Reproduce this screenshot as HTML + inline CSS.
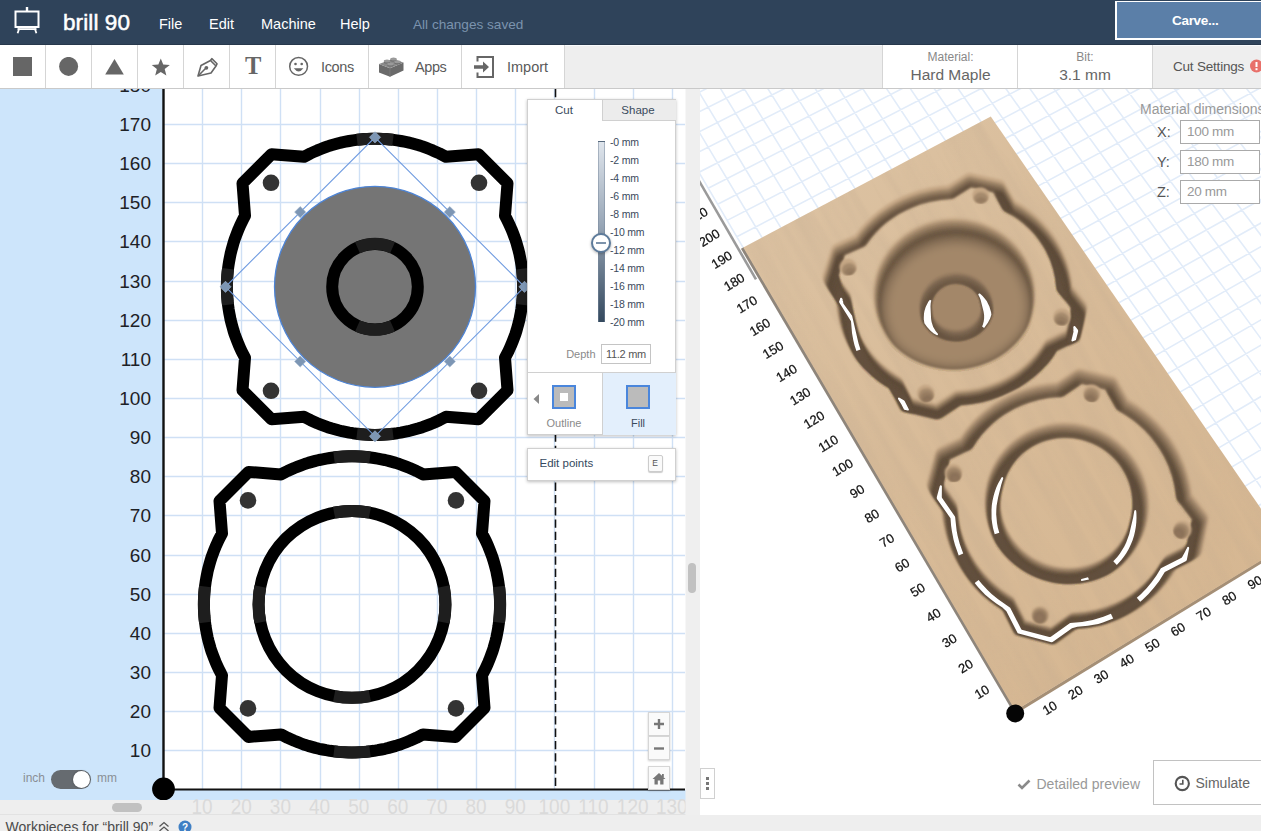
<!DOCTYPE html>
<html lang="en">
<head>
<meta charset="utf-8">
<title>brill 90 - Easel</title>
<style>
*{box-sizing:border-box;margin:0;padding:0}
html,body{width:1261px;height:831px;overflow:hidden;background:#fff;font-family:"Liberation Sans",sans-serif;color:#555}
.abs{position:absolute}
#nav{position:absolute;left:0;top:0;width:1261px;height:45px;background:#2f435a;border-bottom:1px solid #27384c}
#nav .t{position:absolute;color:#fff;white-space:nowrap;line-height:1}
#carve{position:absolute;left:1115px;top:0.5px;width:150px;height:39.5px;background:#5b7fa8;border:2px solid #fff;border-top-width:1.5px;color:#fff;font-weight:bold;font-size:13.5px;line-height:38px;padding-left:55px;letter-spacing:-0.3px}
#tb{position:absolute;left:0;top:45px;width:1261px;height:44px;background:#eeeeee;border-bottom:1px solid #c9c9c9;box-shadow:inset 0 1px 0 #f8fafc}
#tb .c{position:absolute;top:0;height:43px;background:#fff;border-right:1px solid #d5d5d5}
#tb .lbl{position:absolute;top:15px;font-size:14.5px;color:#5a5a5a;line-height:1;white-space:nowrap}
#tb svg{position:absolute}
.mat{position:absolute;top:0;height:43px;background:#fff;border-left:1px solid #d5d5d5;text-align:center}
.mat .a{position:absolute;left:0;right:0;top:6px;font-size:12px;color:#888;line-height:1}
.mat .b{position:absolute;left:0;right:0;top:22px;font-size:15.5px;color:#666;line-height:1}
#left{position:absolute;left:0;top:89px;width:700px;height:726px;overflow:hidden;background:#fff}
#right{position:absolute;left:700px;top:89px;width:561px;height:726px;overflow:hidden;background:#fff}
#bot{position:absolute;left:0;top:815px;width:1261px;height:16px;background:#eeeeee;overflow:hidden}
.panel{position:absolute;background:#fff;border:1px solid #d0d0d0;box-shadow:0 1px 3px rgba(0,0,0,.25)}
.tick{position:absolute;left:610px;font-size:10.5px;color:#3a4a5c;line-height:1;white-space:nowrap;letter-spacing:-0.2px}
.zb{position:absolute;left:648px;width:22px;height:24px;background:#fafafa;border:1px solid #d6d6d6;box-shadow:0 1px 2px rgba(0,0,0,.2)}
.inp{position:absolute;left:480px;width:80px;height:24px;border:1px solid #aaa;background:#fff;font-size:13.5px;color:#999;line-height:22px;padding-left:6px;white-space:nowrap;letter-spacing:-0.3px}
.dl{position:absolute;left:457px;font-size:14.5px;color:#555;line-height:1}
</style>
</head>
<body>
<!-- NAV -->
<div id="nav">
  <svg class="abs" style="left:13px;top:6px" width="28" height="28" viewBox="0 0 28 28">
    <rect x="2.5" y="5.5" width="23" height="15.5" fill="none" stroke="#fff" stroke-width="2"/>
    <rect x="12.8" y="1" width="2.4" height="4.5" fill="#fff"/>
    <rect x="4.5" y="22.2" width="19" height="1.8" fill="#fff"/>
    <path d="M6.2 22.5 L4.6 27.2 M21.8 22.5 L23.4 27.2" stroke="#fff" stroke-width="1.8" fill="none"/>
  </svg>
  <div class="t" id="title" style="left:63px;top:11.5px;font-size:22.5px;-webkit-text-stroke:0.5px #fff;letter-spacing:0.1px">brill 90</div>
  <div class="t" style="left:159px;top:17px;font-size:14.5px">File</div>
  <div class="t" style="left:209px;top:17px;font-size:14.5px">Edit</div>
  <div class="t" style="left:261px;top:17px;font-size:14.5px">Machine</div>
  <div class="t" style="left:340px;top:17px;font-size:14.5px">Help</div>
  <div class="t" style="left:413px;top:18px;font-size:13.6px;color:#7b93ae">All changes saved</div>
  <div id="carve">Carve...</div>
</div>
<!-- TOOLBAR -->
<div id="tb">
  <div class="c" style="left:0;width:46px"><svg style="left:13px;top:12px" width="19" height="19"><rect width="19" height="19" fill="#666"/></svg></div>
  <div class="c" style="left:46px;width:46px"><svg style="left:13px;top:12px" width="20" height="20"><circle cx="9.6" cy="9.4" r="9.5" fill="#666"/></svg></div>
  <div class="c" style="left:92px;width:46px"><svg style="left:12px;top:12px" width="22" height="20"><path d="M10.5 2 L19.8 17.6 L1.2 17.6 Z" fill="#666"/></svg></div>
  <div class="c" style="left:138px;width:46px"><svg style="left:12.7px;top:12px" width="20.5" height="20.5" viewBox="0 0 22 22"><path d="M10.5 1.5 L13.1 8.1 L20.2 8.5 L14.7 13 L16.5 19.9 L10.5 16.1 L4.5 19.9 L6.3 13 L0.8 8.5 L7.9 8.1 Z" fill="#666"/></svg></div>
  <div class="c" style="left:184px;width:46px"><svg style="left:11px;top:10px" width="24" height="24" viewBox="0 0 24 24"><g fill="none" stroke="#666" stroke-width="1.6" stroke-linejoin="round"><path d="M3 21 L6 10.5 L15.5 5.5 L21 11 L16 18 Z"/><path d="M15.5 5.500 L16.800 3.600 L22 8.800 L21 11"/><path d="M3.300 20.700 L10.500 13.500"/></g><circle cx="11.400" cy="12.800" r="1.900" fill="#666"/></svg></div>
  <div class="c" style="left:230px;width:46px"><div style="position:absolute;left:15px;top:9px;font-family:'Liberation Serif',serif;font-weight:bold;font-size:24.5px;color:#666;line-height:1">T</div></div>
  <div class="c" style="left:276px;width:93px"><svg style="left:12px;top:11px" width="22" height="22" viewBox="0 0 22 22"><circle cx="10.600" cy="10.400" r="8.900" fill="none" stroke="#666" stroke-width="1.500"/><circle cx="7.500" cy="8" r="1.300" fill="#666"/><circle cx="13.700" cy="8" r="1.300" fill="#666"/><path d="M5.800 12.300 Q10.600 18.600 15.400 12.300 Z" fill="#666"/></svg><div class="lbl" style="left:45px;letter-spacing:-0.35px">Icons</div></div>
  <div class="c" style="left:369px;width:93px"><svg style="left:9px;top:11px" width="27" height="22" viewBox="0 0 27 22"><path d="M1 8 L1 16.500 L12 20.800 L25.500 14.500 L25.500 6.500 L12 12.300 Z" fill="#6a6a6a"/><path d="M1 8 L12 12.300 L25.500 6.500 L14.500 3 Z" fill="#8a8a8a"/><path d="M12 12.300 V20.800" stroke="#7c7c7c" stroke-width="0.800"/><g fill="#6a6a6a"><ellipse cx="9" cy="6" rx="3.200" ry="1.600"/><ellipse cx="15.500" cy="4" rx="3.200" ry="1.600"/><ellipse cx="12.500" cy="9" rx="3.200" ry="1.600"/><ellipse cx="19.500" cy="6.800" rx="3.200" ry="1.600"/></g><g fill="#9a9a9a"><ellipse cx="9" cy="5" rx="3.200" ry="1.500"/><ellipse cx="15.500" cy="3" rx="3.200" ry="1.500"/><ellipse cx="12.500" cy="8" rx="3.200" ry="1.500"/><ellipse cx="19.500" cy="5.800" rx="3.200" ry="1.500"/></g></svg><div class="lbl" style="left:46px;letter-spacing:-0.4px">Apps</div></div>
  <div class="c" style="left:462px;width:103px"><svg style="left:11px;top:10px" width="24" height="24" viewBox="0 0 24 24"><path d="M4.500 6.500 V2 H20 V22 H4.500 V17.500" fill="none" stroke="#666" stroke-width="2"/><path d="M1 10.200 H10 V6.500 L16 12 L10 17.500 V13.800 H1 Z" fill="#666"/></svg><div class="lbl" style="left:45px">Import</div></div>
  <div class="mat" style="left:882px;width:136px"><div class="a">Material:</div><div class="b">Hard Maple</div></div>
  <div class="mat" style="left:1017px;width:136px;border-right:1px solid #d5d5d5"><div class="a">Bit:</div><div class="b">3.1 mm</div></div>
  <div class="lbl" style="left:1173px;top:15px;font-size:13.5px;color:#555;letter-spacing:-0.2px">Cut Settings</div>
  <svg style="left:1249px;top:14px" width="14" height="14"><circle cx="7.500" cy="7" r="6.500" fill="#e8706a"/><rect x="6.500" y="3" width="2" height="5" fill="#fff"/><rect x="6.500" y="9.200" width="2" height="2" fill="#fff"/></svg>
</div>
<div id="left">
<svg class="abs" style="left:0;top:0" width="700" height="726" viewBox="0 89 700 726" font-family="'Liberation Sans',sans-serif">
<rect x="0" y="89" width="163" height="712" fill="#cde5fb"/>
<rect x="163" y="790" width="523" height="11" fill="#cde5fb"/>
<path d="M202.5 89 V790 M241.5 89 V790 M280.5 89 V790 M320.5 89 V790 M359.5 89 V790 M398.5 89 V790 M437.5 89 V790 M476.5 89 V790 M515.5 89 V790 M554.5 89 V790 M594.5 89 V790 M633.5 89 V790 M672.5 89 V790 M163 750.5 H685 M163 711.5 H685 M163 672.5 H685 M163 633.5 H685 M163 594.5 H685 M163 555.5 H685 M163 515.5 H685 M163 476.5 H685 M163 437.5 H685 M163 398.5 H685 M163 359.5 H685 M163 320.5 H685 M163 281.5 H685 M163 241.5 H685 M163 202.5 H685 M163 163.5 H685 M163 124.5 H685" stroke="#cfe0f5" stroke-width="1.4" fill="none"/>
<path d="M555.5 89 V790" stroke="#111" stroke-width="1.6" stroke-dasharray="8.3 4" fill="none"/>
<path d="M163.5 89 V790" stroke="#111" stroke-width="2.4" fill="none"/>
<path d="M163 789.5 H685" stroke="#111" stroke-width="2" fill="none"/>
<text x="151" y="757.3" font-size="19" fill="#1d2126" text-anchor="end">10</text>
<text x="151" y="718.1" font-size="19" fill="#1d2126" text-anchor="end">20</text>
<text x="151" y="679" font-size="19" fill="#1d2126" text-anchor="end">30</text>
<text x="151" y="639.8" font-size="19" fill="#1d2126" text-anchor="end">40</text>
<text x="151" y="600.7" font-size="19" fill="#1d2126" text-anchor="end">50</text>
<text x="151" y="561.6" font-size="19" fill="#1d2126" text-anchor="end">60</text>
<text x="151" y="522.4" font-size="19" fill="#1d2126" text-anchor="end">70</text>
<text x="151" y="483.3" font-size="19" fill="#1d2126" text-anchor="end">80</text>
<text x="151" y="444.1" font-size="19" fill="#1d2126" text-anchor="end">90</text>
<text x="151" y="405" font-size="19" fill="#1d2126" text-anchor="end">100</text>
<text x="151" y="365.9" font-size="19" fill="#1d2126" text-anchor="end">110</text>
<text x="151" y="326.7" font-size="19" fill="#1d2126" text-anchor="end">120</text>
<text x="151" y="287.6" font-size="19" fill="#1d2126" text-anchor="end">130</text>
<text x="151" y="248.4" font-size="19" fill="#1d2126" text-anchor="end">140</text>
<text x="151" y="209.3" font-size="19" fill="#1d2126" text-anchor="end">150</text>
<text x="151" y="170.2" font-size="19" fill="#1d2126" text-anchor="end">160</text>
<text x="151" y="131" font-size="19" fill="#1d2126" text-anchor="end">170</text>
<text x="151" y="91.9" font-size="19" fill="#1d2126" text-anchor="end">180</text>
<circle cx="375" cy="286.8" r="100.5" fill="#757575" stroke="#4d84d6" stroke-width="1.3"/>
<circle cx="375" cy="286.8" r="42.8" fill="none" stroke="#000" stroke-width="12"/>
<path d="M304 156.8 L307.3 155.1 L310.6 153.4 L313.9 151.9 L317.3 150.4 L320.8 149 L324.2 147.7 L327.7 146.4 L331.2 145.3 L334.8 144.3 L338.4 143.3 L342 142.4 L345.6 141.7 L349.2 141 L352.9 140.4 L356.5 139.9 L360.2 139.4 L363.9 139.1 L367.6 138.9 L371.3 138.7 L375 138.7 L378.7 138.7 L382.4 138.9 L386.1 139.1 L389.8 139.4 L393.5 139.9 L397.1 140.4 L400.8 141 L404.4 141.7 L408 142.4 L411.6 143.3 L415.2 144.3 L418.8 145.3 L422.3 146.4 L425.8 147.7 L429.2 149 L432.7 150.4 L436.1 151.9 L439.4 153.4 L442.7 155.1 L446 156.8 L478.5 154.3 L507.5 183.3 L505 215.8 L506.7 219.1 L508.4 222.4 L509.9 225.7 L511.4 229.1 L512.8 232.6 L514.1 236 L515.4 239.5 L516.5 243 L517.5 246.6 L518.5 250.2 L519.4 253.8 L520.1 257.4 L520.8 261 L521.4 264.7 L521.9 268.3 L522.4 272 L522.7 275.7 L522.9 279.4 L523.1 283.1 L523.1 286.8 L523.1 290.5 L522.9 294.2 L522.7 297.9 L522.4 301.6 L521.9 305.3 L521.4 308.9 L520.8 312.6 L520.1 316.2 L519.4 319.8 L518.5 323.4 L517.5 327 L516.5 330.6 L515.4 334.1 L514.1 337.6 L512.8 341 L511.4 344.5 L509.9 347.9 L508.4 351.2 L506.7 354.5 L505 357.8 L507.5 390.3 L478.5 419.3 L446 416.8 L442.7 418.5 L439.4 420.2 L436.1 421.7 L432.7 423.2 L429.2 424.6 L425.8 425.9 L422.3 427.2 L418.8 428.3 L415.2 429.3 L411.6 430.3 L408 431.2 L404.4 431.9 L400.8 432.6 L397.1 433.2 L393.5 433.7 L389.8 434.2 L386.1 434.5 L382.4 434.7 L378.7 434.9 L375 434.9 L371.3 434.9 L367.6 434.7 L363.9 434.5 L360.2 434.2 L356.5 433.7 L352.9 433.2 L349.2 432.6 L345.6 431.9 L342 431.2 L338.4 430.3 L334.8 429.3 L331.2 428.3 L327.7 427.2 L324.2 425.9 L320.8 424.6 L317.3 423.2 L313.9 421.7 L310.6 420.2 L307.3 418.5 L304 416.8 L271.5 419.3 L242.5 390.3 L245 357.8 L243.3 354.5 L241.6 351.2 L240.1 347.9 L238.6 344.5 L237.2 341 L235.9 337.6 L234.6 334.1 L233.5 330.6 L232.5 327 L231.5 323.4 L230.6 319.8 L229.9 316.2 L229.2 312.6 L228.6 308.9 L228.1 305.3 L227.6 301.6 L227.3 297.9 L227.1 294.2 L226.9 290.5 L226.9 286.8 L226.9 283.1 L227.1 279.4 L227.3 275.7 L227.6 272 L228.1 268.3 L228.6 264.7 L229.2 261 L229.9 257.4 L230.6 253.8 L231.5 250.2 L232.5 246.6 L233.5 243 L234.6 239.5 L235.9 236 L237.2 232.6 L238.6 229.1 L240.1 225.7 L241.6 222.4 L243.3 219.1 L245 215.8 L242.5 183.3 L271.5 154.3 Z" fill="none" stroke="#000" stroke-width="12" stroke-linejoin="round"/>
<path d="M357 139.8 A148.1 148.1 0 0 1 393 139.8 M357.5 247.7 A42.8 42.8 0 0 1 392.5 247.7 M393 433.8 A148.1 148.1 0 0 1 357 433.8 M392.5 325.9 A42.8 42.8 0 0 1 357.5 325.9 M228 304.8 A148.1 148.1 0 0 1 228 268.8 M522 268.8 A148.1 148.1 0 0 1 522 304.8" fill="none" stroke="#1e1e1e" stroke-width="12"/>
<circle cx="271" cy="182.8" r="8.3" fill="#333"/>
<circle cx="271" cy="390.8" r="8.3" fill="#333"/>
<circle cx="479" cy="182.8" r="8.3" fill="#333"/>
<circle cx="479" cy="390.8" r="8.3" fill="#333"/>
<circle cx="352" cy="604.4" r="93.4" fill="none" stroke="#000" stroke-width="12"/>
<path d="M281 474.4 L284.3 472.7 L287.6 471 L290.9 469.5 L294.3 468 L297.8 466.6 L301.2 465.3 L304.7 464 L308.2 462.9 L311.8 461.9 L315.4 460.9 L319 460 L322.6 459.3 L326.2 458.6 L329.9 458 L333.5 457.5 L337.2 457 L340.9 456.7 L344.6 456.5 L348.3 456.3 L352 456.3 L355.7 456.3 L359.4 456.5 L363.1 456.7 L366.8 457 L370.5 457.5 L374.1 458 L377.8 458.6 L381.4 459.3 L385 460 L388.6 460.9 L392.2 461.9 L395.8 462.9 L399.3 464 L402.8 465.3 L406.2 466.6 L409.7 468 L413.1 469.5 L416.4 471 L419.7 472.7 L423 474.4 L455.5 471.9 L484.5 500.9 L482 533.4 L483.7 536.7 L485.4 540 L486.9 543.3 L488.4 546.7 L489.8 550.2 L491.1 553.6 L492.4 557.1 L493.5 560.6 L494.5 564.2 L495.5 567.8 L496.4 571.4 L497.1 575 L497.8 578.6 L498.4 582.3 L498.9 585.9 L499.4 589.6 L499.7 593.3 L499.9 597 L500.1 600.7 L500.1 604.4 L500.1 608.1 L499.9 611.8 L499.7 615.5 L499.4 619.2 L498.9 622.9 L498.4 626.5 L497.8 630.2 L497.1 633.8 L496.4 637.4 L495.5 641 L494.5 644.6 L493.5 648.2 L492.4 651.7 L491.1 655.2 L489.8 658.6 L488.4 662.1 L486.9 665.5 L485.4 668.8 L483.7 672.1 L482 675.4 L484.5 707.9 L455.5 736.9 L423 734.4 L419.7 736.1 L416.4 737.8 L413.1 739.3 L409.7 740.8 L406.2 742.2 L402.8 743.5 L399.3 744.8 L395.8 745.9 L392.2 746.9 L388.6 747.9 L385 748.8 L381.4 749.5 L377.8 750.2 L374.1 750.8 L370.5 751.3 L366.8 751.8 L363.1 752.1 L359.4 752.3 L355.7 752.5 L352 752.5 L348.3 752.5 L344.6 752.3 L340.9 752.1 L337.2 751.8 L333.5 751.3 L329.9 750.8 L326.2 750.2 L322.6 749.5 L319 748.8 L315.4 747.9 L311.8 746.9 L308.2 745.9 L304.7 744.8 L301.2 743.5 L297.8 742.2 L294.3 740.8 L290.9 739.3 L287.6 737.8 L284.3 736.1 L281 734.4 L248.5 736.9 L219.5 707.9 L222 675.4 L220.3 672.1 L218.6 668.8 L217.1 665.5 L215.6 662.1 L214.2 658.6 L212.9 655.2 L211.6 651.7 L210.5 648.2 L209.5 644.6 L208.5 641 L207.6 637.4 L206.9 633.8 L206.2 630.2 L205.6 626.5 L205.1 622.9 L204.6 619.2 L204.3 615.5 L204.1 611.8 L203.9 608.1 L203.9 604.4 L203.9 600.7 L204.1 597 L204.3 593.3 L204.6 589.6 L205.1 585.9 L205.6 582.3 L206.2 578.6 L206.9 575 L207.6 571.4 L208.5 567.8 L209.5 564.2 L210.5 560.6 L211.6 557.1 L212.9 553.6 L214.2 550.2 L215.6 546.7 L217.1 543.3 L218.6 540 L220.3 536.7 L222 533.4 L219.5 500.9 L248.5 471.9 Z" fill="none" stroke="#000" stroke-width="12" stroke-linejoin="round"/>
<path d="M334 457.4 A148.1 148.1 0 0 1 370 457.4 M334.1 512.7 A93.4 93.4 0 0 1 369.9 512.7 M370 751.4 A148.1 148.1 0 0 1 334 751.4 M369.9 696.1 A93.4 93.4 0 0 1 334.1 696.1 M205 622.4 A148.1 148.1 0 0 1 205 586.4 M260.3 622.3 A93.4 93.4 0 0 1 260.3 586.5 M499 586.4 A148.1 148.1 0 0 1 499 622.4 M443.7 586.5 A93.4 93.4 0 0 1 443.7 622.3" fill="none" stroke="#1e1e1e" stroke-width="12"/>
<circle cx="248" cy="500.4" r="8.3" fill="#333"/>
<circle cx="248" cy="708.4" r="8.3" fill="#333"/>
<circle cx="456" cy="500.4" r="8.3" fill="#333"/>
<circle cx="456" cy="708.4" r="8.3" fill="#333"/>
<path d="M375 137.3 L524.5 286.8 L375 436.3 L225.5 286.8 Z" fill="none" stroke="#6f9be0" stroke-width="1.1"/>
<path d="M375 131.7 l5.6 5.6 l-5.6 5.6 l-5.6 -5.6 Z M524.5 281.2 l5.6 5.6 l-5.6 5.6 l-5.6 -5.6 Z M375 430.7 l5.6 5.6 l-5.6 5.6 l-5.6 -5.6 Z M225.5 281.2 l5.6 5.6 l-5.6 5.6 l-5.6 -5.6 Z M449.8 206.5 l5.6 5.6 l-5.6 5.6 l-5.6 -5.6 Z M449.8 355.9 l5.6 5.6 l-5.6 5.6 l-5.6 -5.6 Z M300.2 355.9 l5.6 5.6 l-5.6 5.6 l-5.6 -5.6 Z M300.2 206.5 l5.6 5.6 l-5.6 5.6 l-5.6 -5.6 Z" fill="#7d96b4" stroke="#9fb3cc" stroke-width="0.6"/>
<circle cx="163.5" cy="789" r="11.4" fill="#000"/>
<rect x="0" y="800" width="700" height="15" fill="#eeeeee"/>
<rect x="0" y="814" width="686" height="1" fill="#e2e2e2"/>
<g clip-path="url(#cpx)">
<text transform="translate(202.1 814.2) scale(1 1.15)" font-size="19" fill="#dadada" text-anchor="middle">10</text>
<text transform="translate(241.3 814.2) scale(1 1.15)" font-size="19" fill="#dadada" text-anchor="middle">20</text>
<text transform="translate(280.4 814.2) scale(1 1.15)" font-size="19" fill="#dadada" text-anchor="middle">30</text>
<text transform="translate(319.6 814.2) scale(1 1.15)" font-size="19" fill="#dadada" text-anchor="middle">40</text>
<text transform="translate(358.7 814.2) scale(1 1.15)" font-size="19" fill="#dadada" text-anchor="middle">50</text>
<text transform="translate(397.8 814.2) scale(1 1.15)" font-size="19" fill="#dadada" text-anchor="middle">60</text>
<text transform="translate(437 814.2) scale(1 1.15)" font-size="19" fill="#dadada" text-anchor="middle">70</text>
<text transform="translate(476.1 814.2) scale(1 1.15)" font-size="19" fill="#dadada" text-anchor="middle">80</text>
<text transform="translate(515.3 814.2) scale(1 1.15)" font-size="19" fill="#dadada" text-anchor="middle">90</text>
<text transform="translate(554.4 814.2) scale(1 1.15)" font-size="19" fill="#dadada" text-anchor="middle">100</text>
<text transform="translate(593.5 814.2) scale(1 1.15)" font-size="19" fill="#dadada" text-anchor="middle">110</text>
<text transform="translate(632.7 814.2) scale(1 1.15)" font-size="19" fill="#dadada" text-anchor="middle">120</text>
<text transform="translate(671.8 814.2) scale(1 1.15)" font-size="19" fill="#dadada" text-anchor="middle">130</text>
</g>
<defs><clipPath id="cpx"><rect x="170" y="798.6" width="516" height="16.4"/></clipPath></defs>
<rect x="112" y="803" width="30" height="9" rx="4.5" fill="#c1c1c1"/>
<rect x="685.5" y="89" width="14.5" height="726" fill="#efefef"/>
<rect x="688" y="563" width="8" height="30" rx="4" fill="#c1c1c1"/>
</svg>
<div class="abs" style="left:23px;top:683px;font-size:12px;color:#8a8f95;line-height:1">inch</div>
<div class="abs" style="left:51px;top:681px;width:40px;height:19px;border-radius:10px;background:#666b70"></div>
<div class="abs" style="left:72.500px;top:682px;width:17px;height:17px;border-radius:9px;background:#fff;box-shadow:0 0 2px rgba(0,0,0,.4)"></div>
<div class="abs" style="left:97px;top:683px;font-size:12px;color:#8a8f95;line-height:1">mm</div>
<div class="panel" style="left:526.5px;top:10px;width:149.5px;height:336px"></div>
<div class="abs" style="left:601.5px;top:11px;width:74px;height:21px;background:#ececec;border-left:1px solid #d0d0d0;border-bottom:1px solid #d0d0d0"></div>
<div class="abs" style="left:527px;top:16px;width:74px;text-align:center;font-size:11.500px;color:#3a4a5c;line-height:1">Cut</div>
<div class="abs" style="left:601px;top:16px;width:74px;text-align:center;font-size:11.500px;color:#3a4a5c;line-height:1">Shape</div>
<div class="abs" style="left:598px;top:52px;width:6.500px;height:181px;background:linear-gradient(#dfe5ec,#9aa8b8 45%,#34495e);border:1px solid rgba(120,135,155,.5);border-bottom:none"></div>
<div class="tick" style="top:48.0px">-0 mm</div>
<div class="tick" style="top:66.0px">-2 mm</div>
<div class="tick" style="top:84.0px">-4 mm</div>
<div class="tick" style="top:102.0px">-6 mm</div>
<div class="tick" style="top:120.0px">-8 mm</div>
<div class="tick" style="top:138.0px">-10 mm</div>
<div class="tick" style="top:156.0px">-12 mm</div>
<div class="tick" style="top:174.0px">-14 mm</div>
<div class="tick" style="top:192.0px">-16 mm</div>
<div class="tick" style="top:210.0px">-18 mm</div>
<div class="tick" style="top:228.0px">-20 mm</div>
<div class="abs" style="left:590.500px;top:143.8px;width:20px;height:20px;border-radius:10px;background:#fff;border:2px solid #5d7b9b;box-shadow:0 1px 3px rgba(0,0,0,.3)"></div>
<div class="abs" style="left:595.500px;top:153.2px;width:10px;height:1.500px;background:#7d93ab"></div>
<div class="abs" style="left:540px;top:260px;width:55.500px;text-align:right;font-size:11px;color:#8a8a8a;line-height:1">Depth</div>
<div class="abs" style="left:601px;top:254.5px;width:50px;height:20.500px;border:1px solid #c4c4c4;background:#fff;font-size:11px;color:#555;line-height:19px;padding-left:4px;white-space:nowrap;letter-spacing:-0.3px">11.2 mm</div>
<div class="abs" style="left:527.500px;top:283px;width:148px;height:1px;background:#d0d0d0"></div>
<div class="abs" style="left:601.500px;top:284px;width:74px;height:62px;background:#e3effc;border-left:1px solid #d0d0d0"></div>
<svg class="abs" style="left:532px;top:304px" width="8" height="12"><path d="M7 1 L1.500 6 L7 11 Z" fill="#888"/></svg>
<div class="abs" style="left:552px;top:296px;width:24px;height:24px;background:#bbbbbb;border:2px solid #4a86dc"></div>
<div class="abs" style="left:560px;top:304px;width:8px;height:8px;background:#fff"></div>
<div class="abs" style="left:626px;top:296px;width:24px;height:24px;background:#bbbbbb;border:2px solid #4a86dc"></div>
<div class="abs" style="left:527px;top:329px;width:74px;text-align:center;font-size:11px;color:#8a8a8a;line-height:1">Outline</div>
<div class="abs" style="left:601px;top:329px;width:74px;text-align:center;font-size:11px;color:#3a4a5c;line-height:1">Fill</div>
<div class="panel" style="left:526.500px;top:359px;width:149.500px;height:32.500px"></div>
<div class="abs" style="left:539.500px;top:369px;font-size:11.500px;color:#34495e;line-height:1;white-space:nowrap">Edit points</div>
<div class="abs" style="left:647.500px;top:365.5px;width:15px;height:17px;border:1px solid #ccc;border-radius:2px;background:#fafafa;box-shadow:0 1px 1px rgba(0,0,0,.2);font-size:8.500px;color:#555;text-align:center;line-height:15px">E</div>
<div class="zb" style="top:622.5px"></div>
<div class="zb" style="top:646.5px"></div>
<div class="zb" style="top:677.0px"></div>
<svg class="abs" style="left:648px;top:622.5px" width="22" height="80"><path d="M6 12 H16 M11 7 V17" stroke="#777" stroke-width="2.400" fill="none"/><path d="M6 36.500 H16" stroke="#777" stroke-width="2.400" fill="none"/><path d="M11 61 L4.500 67 H6.500 V72.500 H9.800 V68.500 H12.200 V72.500 H15.500 V67 H17.500 Z" fill="#777"/><rect x="14" y="62" width="1.800" height="3" fill="#777"/></svg>
</div><div id="right">
<svg class="abs" style="left:0;top:0" width="561" height="726" viewBox="700 89 561 726" font-family="'Liberation Sans',sans-serif">
<defs>
<filter id="b1" x="-10%" y="-10%" width="120%" height="120%"><feGaussianBlur stdDeviation="1.1"/></filter>
<filter id="b15" x="-10%" y="-10%" width="120%" height="120%"><feGaussianBlur stdDeviation="1.7"/></filter>
<filter id="b2" x="-10%" y="-10%" width="120%" height="120%"><feGaussianBlur stdDeviation="2.2"/></filter>
<filter id="b3" x="-20%" y="-20%" width="140%" height="140%"><feGaussianBlur stdDeviation="4"/></filter>
<filter id="tb" x="-10%" y="-10%" width="120%" height="120%"><feGaussianBlur stdDeviation="0.35"/></filter>
<filter id="grain" x="0" y="0" width="100%" height="100%"><feTurbulence type="fractalNoise" baseFrequency="0.005 0.07" numOctaves="3" seed="7" result="n"/><feColorMatrix in="n" type="matrix" values="0 0 0 0 0.50  0 0 0 0 0.38  0 0 0 0 0.27  0.9 0.5 0 0 -0.55"/></filter>
<linearGradient id="wg" gradientUnits="userSpaceOnUse" x1="760" y1="200" x2="1200" y2="640"><stop offset="0" stop-color="#dcc2a2"/><stop offset="0.5" stop-color="#d8bb98"/><stop offset="1" stop-color="#d6b792"/></linearGradient>
</defs>
<path d="M1015.4 711 L501.7 -163.3 M1036.3 698.2 L518.7 -171 M1057.1 685.5 L535.6 -178.6 M1077.8 672.9 L552.5 -186.2 M1098.3 660.3 L569.2 -193.8 M1118.7 647.8 L585.9 -201.3 M1139 635.4 L602.5 -208.8 M1159.1 623.1 L619 -216.3 M1179.2 610.8 L635.5 -223.7 M1199.1 598.6 L651.9 -231.1 M1218.9 586.5 L668.2 -238.5 M1238.6 574.4 L684.4 -245.8 M1258.1 562.4 L700.6 -253.1 M1277.6 550.5 L716.7 -260.4 M1296.9 538.7 L732.7 -267.6 M1316.1 526.9 L748.6 -274.8 M1335.3 515.2 L764.5 -282 M1354.3 503.6 L780.3 -289.1 M1373.2 492 L796.1 -296.2 M1392 480.5 L811.7 -303.3 M1410.6 469.1 L827.3 -310.4 M1429.2 457.7 L842.9 -317.4 M1447.7 446.4 L858.3 -324.4 M1466 435.1 L873.7 -331.3 M1484.3 424 L889 -338.2 M1502.4 412.8 L904.3 -345.1 M1520.5 401.8 L919.5 -352 M1538.4 390.8 L934.6 -358.8 M1556.3 379.9 L949.7 -365.6 M1574 369 L964.7 -372.4 M1591.7 358.2 L979.6 -379.2 M1609.2 347.4 L994.5 -385.9 M1626.7 336.8 L1009.3 -392.6 M1644.1 326.1 L1024 -399.2 M1661.3 315.6 L1038.7 -405.8 M1678.5 305 L1053.3 -412.4 M1695.6 294.6 L1067.9 -419 M1712.5 284.2 L1082.4 -425.6 M1729.4 273.8 L1096.8 -432.1 M1746.2 263.6 L1111.2 -438.6 M1762.9 253.3 L1125.5 -445 M1779.5 243.2 L1139.7 -451.5 M1796.1 233 L1153.9 -457.9 M1812.5 223 L1168.1 -464.3 M1828.8 213 L1182.1 -470.6 M1845.1 203 L1196.1 -477 M1861.3 193.1 L1210.1 -483.3 M1877.4 183.3 L1224 -489.5 M1893.4 173.5 L1237.8 -495.8 M1909.3 163.7 L1251.6 -502 M1925.1 154 L1265.3 -508.2 M1940.9 144.4 L1279 -514.4 M1015.4 711 L1931.1 150.4 M1002.7 689.3 L1915.2 134.5 M990.1 667.8 L1899.4 118.7 M977.6 646.6 L1883.9 103.1 M965.3 625.7 L1868.5 87.7 M953.1 605 L1853.2 72.5 M941.1 584.5 L1838.1 57.4 M929.2 564.3 L1823.2 42.4 M917.5 544.3 L1808.4 27.6 M905.8 524.5 L1793.8 13 M894.4 505 L1779.3 -1.5 M883 485.7 L1764.9 -15.9 M871.8 466.6 L1750.7 -30.1 M860.7 447.7 L1736.7 -44.1 M849.7 429 L1722.7 -58.1 M838.9 410.6 L1709 -71.9 M828.2 392.3 L1695.3 -85.5 M817.6 374.3 L1681.8 -99 M807.1 356.4 L1668.4 -112.4 M796.7 338.8 L1655.1 -125.7 M786.5 321.3 L1642 -138.8 M776.3 304 L1629 -151.9 M766.3 287 L1616.1 -164.8 M756.3 270 L1603.4 -177.5 M746.5 253.3 L1590.7 -190.2 M736.8 236.8 L1578.2 -202.7 M727.2 220.4 L1565.8 -215.1 M717.7 204.2 L1553.5 -227.4 M708.2 188.2 L1541.3 -239.6 M698.9 172.3 L1529.2 -251.7 M689.7 156.6 L1517.3 -263.7 M680.6 141.1 L1505.4 -275.5 M671.5 125.7 L1493.7 -287.3 M662.6 110.5 L1482 -298.9 M653.7 95.4 L1470.5 -310.4 M644.9 80.5 L1459.1 -321.9 M636.3 65.7 L1447.8 -333.2 M627.7 51.1 L1436.5 -344.4 M619.2 36.6 L1425.4 -355.6 M610.7 22.2 L1414.4 -366.6 M602.4 8 L1403.4 -377.6 M594.1 -6 L1392.6 -388.4 M586 -19.9 L1381.8 -399.1 M577.9 -33.7 L1371.2 -409.8 M569.8 -47.4 L1360.6 -420.4 M561.9 -60.9 L1350.2 -430.9 M554 -74.3 L1339.8 -441.2 M546.2 -87.6 L1329.5 -451.5 M538.5 -100.7 L1319.3 -461.8 M530.9 -113.7 L1309.2 -471.9 M523.3 -126.6 L1299.1 -481.9 M515.8 -139.4 L1289.2 -491.9 M508.3 -152.1 L1279.3 -501.8 M501 -164.6 L1269.5 -511.6" stroke="#e2ecf9" stroke-width="1.6" fill="none" filter="url(#tb)"/>
<path d="M697 177.3 L756 279.4" stroke="#9a9a9a" stroke-width="2.6" fill="none"/>
<clipPath id="wc"><path d="M1015.4 710.7 L743.3 247.5 L990.8 116.4 L1286 545.1 Z"/></clipPath>
<path d="M1014.6 711.2 L742.4 248" stroke="#8e857b" stroke-width="3.4" fill="none"/>
<path d="M1016.1 711.8 L1286.6 546.2" stroke="#a58f76" stroke-width="3.2" fill="none"/>
<path d="M1015.4 710.7 L743.3 247.5 L990.8 116.4 L1286 545.1 Z" fill="url(#wg)"/>
<g clip-path="url(#wc)">
<g transform="rotate(-120.4 1000 420)" opacity="0.42"><rect x="600" y="100" width="800" height="640" filter="url(#grain)"/></g>
<path d="M855.3 235.1 L835.2 244.1 L832.6 246 L831.4 248.3 L822.8 275.3 L822.7 278.6 L823.8 280.9 L835.9 297.7 L836.2 303.7 L836.9 309.4 L838.3 317.3 L839.7 322.9 L842.2 330.5 L844.4 335.8 L847.9 343.3 L850.9 348.5 L855.4 355.3 L858.9 360 L864.4 366.4 L868.5 370.5 L872.9 374.6 L879.5 379.9 L884.5 383.5 L890.1 386.9 L899.9 406.6 L901.7 408.8 L903.1 409.7 L935.3 417.7 L938.3 417.8 L941.1 416.7 L960.2 403.9 L970.3 403 L982.1 400.9 L991 398.5 L1002.2 394.4 L1010.4 390.7 L1018.2 386.4 L1025.7 381.5 L1032.8 376 L1039.3 370.2 L1045.4 363.9 L1050.9 357.2 L1056 349.7 L1076.6 340 L1077.8 339.2 L1079.6 337 L1086.8 307.6 L1086.8 304.8 L1085.5 302 L1072 285 L1070.8 276 L1068.3 265.5 L1065.6 257.6 L1061.3 247.9 L1057.3 240.7 L1052.8 233.8 L1047.6 227.2 L1041.9 220.9 L1035.8 215.1 L1029.3 209.8 L1022.4 205 L1014.7 200.4 L1004.8 182.9 L1003.7 181.5 L1001.6 180.1 L971.3 173.2 L968.5 173.1 L965.8 174.1 L947.9 185.4 L938.7 186.2 L930 187.6 L919.2 190.3 L910.8 193 L902.9 196.3 L895.3 200 L887.9 204.3 L879 210.5 L872.4 215.9 L866.2 221.9 L860.7 228.1 Z M862.8 246.1 L865 244.5 L870 237.8 L874.8 232.2 L880 227 L885.6 222.1 L891.5 217.7 L897.8 213.6 L906.6 208.9 L913.5 205.9 L920.6 203.3 L930.4 200.7 L940.4 199 L950.6 198.1 L952.8 197.7 L971 186.3 L994 191.4 L1004.1 209 L1005.8 210.5 L1012.6 214.4 L1018.8 218.5 L1024.6 223.1 L1030.1 228 L1035.1 233.3 L1039.7 239 L1043.9 244.9 L1047.6 251.2 L1051.7 259.9 L1054.8 268.9 L1057 278.3 L1058.2 288 L1058.8 290.1 L1072.3 307.4 L1067 329.4 L1046.7 339 L1045.1 340.6 L1040.8 347.2 L1036.1 353.1 L1030.9 358.8 L1025.3 364 L1019.3 368.9 L1012.8 373.3 L1006 377.3 L998.9 380.7 L989 384.6 L978.8 387.4 L968.2 389.3 L957.4 390.2 L955.1 390.7 L935.7 403.5 L911.4 397.6 L901.3 377.9 L899.5 376.4 L894.8 373.5 L888.4 369.1 L882.4 364.3 L878.7 360.9 L873.4 355.4 L870.2 351.6 L865.7 345.5 L863 341.4 L859.4 334.9 L857.4 330.5 L854.7 323.6 L853.3 319 L852.1 314.3 L850.8 307.2 L850 300 L849.8 294.9 L849.3 292.7 L837.1 275.8 L843.8 254.6 Z" fill="#c4a684" fill-rule="evenodd" filter="url(#b15)"/>
<path d="M835.9 297.7 L836 298.1 L837.5 300.2 L837.8 306.3 L838.4 311.8 L839.9 319.7 L841.3 325.3 L843.8 333 L845.9 338.2 L849.5 345.6 L852.3 350.5 L855.7 355.7 L859 360.1 L864.5 366.5 L872.8 374.5 L879.6 380 L884.5 383.5 L890.1 386.9 L890.9 388.5 L891.2 388.7 L900.7 407.6 L901.9 408.9 L903.6 409.9 L935.8 417.8 L938.3 417.8 L940.9 416.8 L960.2 403.9 L970.3 403 L981.9 400.9 L991 398.5 L1002 394.5 L1010.2 390.8 L1018.1 386.4 L1025.7 381.5 L1032.8 376 L1039.2 370.3 L1045.2 364 L1050.9 357.2 L1056 349.7 L1076.3 340.2 L1078 339 L1079.2 337.6 L1086 309.6 L1085.9 307.3 L1084.9 305.1 L1071.2 287.9 L1070 278.9 L1067.6 268.7 L1064.9 260.7 L1060.6 251.1 L1056.7 243.9 L1052.1 237 L1047 230.4 L1041.4 224.3 L1035.4 218.6 L1029.1 213.5 L1022.2 208.6 L1014.3 204 L1004.4 186.5 L1003.5 185.2 L1001.9 184.1 L1001.1 183.7 L971.1 177 L968.8 177 L966.5 177.8 L948.5 189.2 L939.3 190 L930.8 191.4 L919.9 194 L911.6 196.8 L903.9 199.9 L896.4 203.6 L889 207.9 L880.1 214.1 L873.6 219.5 L867.6 225.2 L862.1 231.3 L856.6 238.5 L836.5 247.5 L834.5 248.9 L833 251.4 L824.5 278.3 L824.3 280.7 L824.8 282.5 Z M863 246 L865 244.5 L870 237.8 L874.8 232.2 L880 227 L885.6 222.1 L891.5 217.7 L897.8 213.6 L906.6 208.9 L913.5 205.9 L920.6 203.3 L930.4 200.7 L940.4 199 L950.6 198.1 L952.8 197.7 L971 186.3 L994 191.4 L1004.1 209 L1005.8 210.5 L1012.6 214.4 L1018.8 218.5 L1024.6 223.1 L1030.1 228 L1035.1 233.3 L1039.7 239 L1043.9 244.9 L1047.6 251.2 L1051.7 259.9 L1054.8 268.9 L1057 278.3 L1058.2 288 L1058.8 290.1 L1072.3 307.4 L1071.9 309.2 L1072.4 309.9 L1067 332.1 L1046.8 341.7 L1045.3 343.3 L1041 349.8 L1036.3 355.7 L1031.1 361.3 L1025.5 366.6 L1019.5 371.4 L1013.1 375.8 L1006.3 379.8 L999.2 383.3 L989.3 387.1 L979.1 390 L968.6 391.8 L957.8 392.7 L955.6 393.2 L936.3 406 L911.7 400 L901.7 380.3 L900 378.9 L895.3 376 L889 371.7 L883 366.8 L879.2 363.4 L874 358 L870.7 354.1 L866.3 348.1 L863.6 344 L860 337.5 L858 333.1 L855.3 326.3 L853.9 321.6 L852.1 314.3 L850.8 307.2 L850 300 L849.9 295.4 L837.8 278.7 L838.2 277.3 L837.1 275.8 L843.8 254.6 Z" fill="#998064" fill-rule="evenodd" filter="url(#b15)"/>
<path d="M836 298.1 L839.1 302.7 L839.4 308.8 L840 314.3 L841.4 322.1 L842.8 327.6 L845.3 335.2 L847.4 340.4 L850.9 347.7 L853.7 352.6 L855.9 356 L859 360.1 L864.5 366.5 L872.8 374.5 L879.6 380 L884.5 383.5 L890.1 386.9 L890.9 388.5 L892.3 390.5 L901.3 408.3 L901.9 408.9 L903.6 409.9 L935.8 417.8 L938.3 417.8 L940.9 416.8 L960.2 403.9 L970.3 403 L981.9 400.9 L991 398.5 L1002 394.5 L1010.2 390.8 L1018.1 386.4 L1025.7 381.5 L1032.8 376 L1039.2 370.3 L1045.2 364 L1050.9 357.2 L1056 349.7 L1076.3 340.2 L1078 339 L1078.8 338 L1085.1 312.2 L1085 310 L1084 307.9 L1070.4 290.8 L1069.2 281.8 L1066.8 271.6 L1064.2 263.8 L1060 254.2 L1056 247.1 L1051.5 240.3 L1046.4 233.8 L1040.9 227.7 L1035 222.1 L1028.7 217 L1021.9 212.2 L1014 207.5 L1004.1 190 L1003.3 188.9 L1001.7 187.8 L971.3 180.8 L969.2 180.8 L967 181.6 L949.1 193 L939.8 193.8 L931.4 195.1 L920.6 197.8 L912.4 200.4 L904.8 203.6 L897.3 207.2 L890 211.5 L881.2 217.6 L874.8 222.9 L868.8 228.6 L863.4 234.7 L857.9 241.9 L837.8 250.9 L835.9 252.2 L834.5 254.4 L826.1 281.2 L825.9 283.4 L826.1 284.2 L835.9 297.7 Z M863.2 245.9 L865 244.5 L870 237.8 L874.8 232.2 L880 227 L885.6 222.1 L891.5 217.7 L897.8 213.6 L906.6 208.9 L913.5 205.9 L920.6 203.3 L930.4 200.7 L940.4 199 L950.6 198.1 L952.8 197.7 L971 186.3 L994 191.4 L1004.1 209 L1005.8 210.5 L1012.6 214.4 L1018.8 218.5 L1024.6 223.1 L1030.1 228 L1035.1 233.3 L1039.7 239 L1043.9 244.9 L1047.6 251.2 L1051.7 259.9 L1054.8 268.9 L1057 278.3 L1058.2 288 L1058.8 290.1 L1072.3 307.4 L1071.9 309.2 L1072.4 309.9 L1072 311.7 L1072.5 312.4 L1067.1 334.9 L1046.9 344.4 L1045.4 345.9 L1041.1 352.3 L1036.5 358.3 L1031.4 363.9 L1025.8 369.1 L1019.7 374 L1013.3 378.4 L1006.6 382.3 L999.5 385.8 L989.6 389.6 L979.4 392.4 L968.9 394.3 L958.2 395.2 L956.1 395.7 L936.9 408.4 L912.1 402.4 L902.1 382.7 L900.5 381.3 L895.9 378.6 L889.5 374.2 L883.5 369.4 L879.8 366 L874.5 360.5 L871.3 356.7 L866.9 350.7 L864.2 346.5 L860.6 340.1 L858.6 335.7 L855.9 328.9 L854.5 324.3 L852.1 314.3 L850.8 307.2 L849.9 297.4 L838.4 281.5 L838.9 280.2 L837.8 278.7 L838.2 277.3 L837.1 275.8 L843.8 254.6 Z" fill="#79634d" fill-rule="evenodd" filter="url(#b15)"/>
<path d="M837.5 300.2 L837.5 300.6 L840.6 305.2 L840.9 311.4 L841.5 316.8 L842.9 324.5 L844.3 329.9 L846.7 337.4 L848.8 342.6 L852.3 349.8 L855 354.7 L859 360.1 L864.5 366.5 L872.8 374.5 L879.6 380 L884.5 383.5 L890.1 386.9 L890.9 388.5 L891.2 388.7 L892 390.3 L893.4 392.2 L901.9 408.9 L903.6 409.9 L935.8 417.8 L938.3 417.8 L940.9 416.8 L960.2 403.9 L970.3 403 L981.9 400.9 L991 398.5 L1002 394.5 L1010.2 390.8 L1018.1 386.4 L1025.5 381.6 L1032.8 376 L1039.2 370.3 L1045.2 364 L1050.9 357.2 L1056 349.7 L1076.3 340.2 L1078 339 L1078.4 338.5 L1084.2 314.7 L1084.2 312.6 L1083.3 310.7 L1069.7 293.6 L1068.5 284.6 L1066.1 274.5 L1063.5 266.8 L1059.3 257.3 L1055.4 250.3 L1050.9 243.5 L1045.9 237.1 L1040.5 231.1 L1034.6 225.6 L1028.4 220.5 L1021.6 215.7 L1013.7 211 L1003.8 193.5 L1003.1 192.5 L1001.6 191.4 L971.6 184.6 L969.6 184.6 L967.5 185.3 L949.6 196.7 L940.3 197.5 L932 198.8 L921.3 201.4 L913.2 204.1 L905.7 207.2 L898.3 210.8 L891.1 215 L882.3 221.1 L875.9 226.4 L870.1 232 L864.7 238 L859.1 245.2 L839.1 254.2 L837.3 255.4 L836.1 257.5 L827.7 284 L827.5 286.1 L835.9 297.7 L836 298.1 Z M864.5 245 L865.6 243.8 L870 237.8 L874.8 232.2 L880 227 L885.6 222.1 L891.5 217.7 L897.8 213.6 L906.6 208.9 L913.5 205.9 L920.6 203.3 L930.4 200.7 L940.4 199 L950.6 198.1 L952.8 197.7 L971 186.3 L994 191.4 L1004.1 209 L1005.8 210.5 L1012.6 214.4 L1018.8 218.5 L1024.6 223.1 L1030.1 228 L1035.1 233.3 L1039.7 239 L1043.9 244.9 L1047.6 251.2 L1051.7 259.9 L1054.8 268.9 L1057 278.3 L1058.2 288 L1058.8 290.1 L1072.3 307.4 L1071.9 309.2 L1072.4 309.9 L1072 311.7 L1072.5 312.4 L1072.1 314.1 L1072.6 314.8 L1067.1 337.6 L1046.9 347.1 L1045.6 348.5 L1041.3 354.9 L1036.7 360.8 L1031.6 366.4 L1026 371.6 L1020 376.5 L1013.6 380.8 L1006.8 384.8 L999.8 388.2 L989.9 392 L979.7 394.9 L969.3 396.8 L958.6 397.6 L956.6 398.1 L937.5 410.8 L912.4 404.7 L902.4 385.1 L901 383.8 L896.4 381 L890 376.7 L884.1 371.9 L880.3 368.5 L875.1 363 L871.9 359.2 L867.4 353.2 L864.8 349.1 L861.2 342.6 L859.2 338.2 L856.5 331.4 L855.1 326.8 L852.1 314.3 L850.8 307.2 L850 299.4 L839.1 284.3 L839.5 283 L838.4 281.5 L838.9 280.2 L837.8 278.7 L838.2 277.3 L837.1 275.8 L843.8 254.6 L862.8 246.1 Z" fill="#5c4a38" fill-rule="evenodd" filter="url(#b15)"/>
<path d="M837.5 300.6 L842.1 307.6 L842.4 313.9 L843 319.2 L844.4 326.9 L845.8 332.2 L848.2 339.6 L850.2 344.7 L853.7 351.9 L856.4 356.7 L859 360.1 L864.5 366.5 L872.8 374.5 L879.6 380 L884.5 383.5 L890.1 386.9 L890.9 388.5 L891.2 388.7 L892 390.3 L892.3 390.5 L893.1 392 L894.5 393.9 L902.1 409.1 L903.6 409.9 L935.8 417.8 L938.3 417.8 L940.9 416.8 L960.2 403.9 L970.3 403 L981.9 400.9 L991 398.5 L1002 394.5 L1010.2 390.8 L1018.1 386.4 L1025.5 381.6 L1032.8 376 L1039.2 370.3 L1045.2 364 L1050.9 357.2 L1056 349.7 L1076.3 340.2 L1078 339 L1083.4 317.3 L1083.3 315.3 L1082.5 313.5 L1068.9 296.4 L1067.7 287.4 L1065.4 277.4 L1062.8 269.8 L1058.6 260.2 L1054.7 253.3 L1050.4 246.8 L1045.4 240.4 L1040 234.5 L1034.2 228.9 L1028 223.8 L1021.4 219.2 L1013.4 214.5 L1002.9 196.1 L1001.2 195 L995.3 193.6 L1004.2 209.2 L1005.8 210.5 L1012.6 214.4 L1018.8 218.5 L1024.6 223.1 L1030.1 228 L1035.1 233.3 L1039.7 239 L1043.9 244.9 L1047.6 251.2 L1051.7 259.9 L1054.8 268.9 L1057 278.3 L1058.2 288 L1058.8 290.1 L1072.3 307.4 L1071.9 309.2 L1072.4 309.9 L1072 311.7 L1072.5 312.4 L1072.1 314.1 L1072.6 314.8 L1072.2 316.5 L1072.8 317.2 L1067.2 340.2 L1046.9 349.8 L1045.7 351.1 L1041.5 357.4 L1036.9 363.3 L1031.8 368.9 L1026.2 374.1 L1020.2 378.9 L1013.8 383.3 L1007.1 387.2 L1000 390.7 L990.2 394.5 L980.1 397.3 L969.6 399.2 L958.9 400.1 L957.1 400.5 L938 413.1 L912.8 407 L902.8 387.4 L901.4 386.2 L896.9 383.5 L890.5 379.1 L884.6 374.3 L880.9 370.9 L875.6 365.5 L872.4 361.7 L868 355.7 L865.4 351.6 L861.8 345.1 L859.7 340.7 L857.1 334 L854.5 324.7 L852.1 314.3 L850.8 307.2 L850.2 301.6 L839.7 287.1 L840.1 285.8 L839.1 284.3 L839.5 283 L838.4 281.5 L838.9 280.2 L837.8 278.7 L838.2 277.3 L837.1 275.8 L843.3 256.1 L840.3 257.5 L838.7 258.6 L837.6 260.4 L829.3 287 L829.1 288.4 L835.9 297.7 L836 298.1 L837.5 300.2 Z M864.7 244.8 L870 237.8 L874.8 232.2 L878.1 228.9 L871.2 235.3 L865.9 241.2 L861.9 246.5 Z" fill="#5d4b39" fill-rule="evenodd" filter="url(#b15)"/>
<path d="M839.1 302.7 L839.1 303.1 L843.6 309.9 L843.9 316.3 L844.5 321.6 L845.9 329.2 L847.2 334.4 L849.6 341.8 L851.6 346.8 L855 353.9 L857.2 357.8 L859 360.1 L864.5 366.5 L872.8 374.5 L879.6 380 L884.5 383.5 L890.1 386.9 L890.9 388.5 L891.2 388.7 L892 390.3 L892.3 390.5 L893.1 392 L893.4 392.2 L894.2 393.7 L895.6 395.6 L902.5 409.3 L903.6 409.9 L935.8 417.8 L938.3 417.8 L940.9 416.8 L960.2 403.9 L970.3 403 L981.9 400.9 L991 398.5 L1002 394.5 L1010.2 390.8 L1018.1 386.4 L1025.5 381.6 L1032.8 376 L1039.2 370.3 L1045.2 364 L1050.9 357.2 L1056 349.7 L1076.3 340.2 L1077.7 339.3 L1082.5 319.7 L1082.5 317.9 L1081.7 316.2 L1068.2 299.2 L1067 290.2 L1064.6 280.2 L1062.1 272.7 L1058 263.3 L1054.1 256.4 L1049.8 249.9 L1044.9 243.6 L1039.6 237.8 L1035.8 234.2 L1039.7 239 L1043.9 244.9 L1047.6 251.2 L1051.7 259.9 L1054.8 268.9 L1057 278.3 L1058.2 288 L1058.9 290.3 L1072.3 307.4 L1071.9 309.2 L1072.4 309.9 L1072 311.7 L1072.5 312.4 L1072.1 314.1 L1072.6 314.8 L1072.2 316.5 L1072.8 317.2 L1072.3 318.9 L1072.9 319.6 L1067.2 342.8 L1047 352.4 L1045.9 353.6 L1041.7 359.9 L1037.1 365.8 L1032 371.3 L1026.4 376.5 L1020.4 381.3 L1014.1 385.7 L1007.3 389.6 L1000.3 393.1 L990.5 396.8 L980.4 399.7 L970 401.6 L959.3 402.4 L957.6 402.8 L938.6 415.5 L913.1 409.3 L903.2 389.7 L901.9 388.6 L897.4 385.9 L891.1 381.6 L885.1 376.8 L881.4 373.4 L876.2 368 L873 364.2 L868.6 358.2 L865.9 354.1 L862.4 347.6 L860.3 343.2 L857.7 336.5 L856.2 331.9 L852.1 314.3 L850.8 307.2 L850.4 303.8 L840.3 289.8 L840.7 288.5 L839.7 287.1 L840.1 285.8 L839.1 284.3 L839.5 283 L838.4 281.5 L838.9 280.2 L837.8 278.7 L838.2 277.3 L837.1 275.8 L841.9 260.5 L840 261.8 L839.1 263.4 L830.8 289.6 L830.8 290.6 L835.9 297.7 L836 298.1 Z M1003.8 208.6 L1005.8 210.5 L1010.4 213.1 L1002.7 199.7 L1001.2 198.6 L997.7 197.8 Z" fill="#5e4c3a" fill-rule="evenodd" filter="url(#b15)"/>
<path d="M839.1 303.1 L845.1 312.3 L845.4 318.8 L846 324 L847.4 331.5 L848.6 336.6 L851 344 L853 348.9 L856.4 355.9 L858.1 358.9 L864.4 366.4 L868.5 370.5 L872.8 374.5 L879.5 379.9 L884.5 383.5 L890.1 386.9 L890.9 388.5 L891.2 388.7 L892 390.3 L892.3 390.5 L893.1 392 L893.4 392.2 L894.2 393.7 L894.5 393.9 L895.3 395.4 L896.7 397.3 L902.8 409.5 L903.6 409.9 L935.3 417.7 L937.8 417.9 L938.8 417.7 L913.5 411.5 L903.5 392 L902.3 390.9 L897.9 388.3 L891.6 384 L885.7 379.2 L881.9 375.8 L876.7 370.4 L873.5 366.6 L869.1 360.6 L866.5 356.5 L862.9 350.1 L860.9 345.7 L858.2 339 L855.6 329.7 L852.1 314.3 L850.6 305.9 L840.9 292.6 L841.3 291.2 L840.3 289.8 L840.7 288.5 L839.7 287.1 L840.1 285.8 L839.1 284.3 L839.5 283 L838.4 281.5 L838.9 280.2 L837.8 278.7 L838.2 277.3 L837.5 276.3 L832.4 292.8 L835.9 297.7 L836 298.1 L837.5 300.2 L837.5 300.6 L839.1 302.7 Z M939.9 417.2 L941.1 416.7 L958.5 405.1 Z M1007.9 391.9 L1018.1 386.4 L1025.5 381.6 L1032.8 376 L1039.2 370.3 L1045.2 364 L1050.7 357.4 L1055 351.2 L1047.1 355 L1046 356.1 L1041.9 362.3 L1037.3 368.2 L1032.2 373.8 L1026.6 378.9 L1020.6 383.7 L1014.3 388.1 Z M1067.5 344.3 L1077.4 339.5 L1081.7 322.1 L1081.7 320.4 L1080.9 318.9 L1072.2 307.9 L1071.9 309.2 L1072.4 309.9 L1072 311.7 L1072.5 312.4 L1072.1 314.1 L1072.6 314.8 L1072.2 316.5 L1072.8 317.2 L1072.3 318.9 L1072.9 319.6 L1072.5 321.3 L1073 322 Z M1046.8 249.8 L1051.7 259.9 L1054.8 268.9 L1057 278.3 L1058.2 288 L1058.8 290.1 L1067.3 301.1 L1066.3 292.9 L1063.9 283 L1061.4 275.6 L1057.3 266.2 L1053.6 259.5 L1049.3 253 Z M1003.9 208.8 L1005.7 210.4 L1007.1 211.2 L1002.5 203.1 L1001.1 202.2 L1000 201.9 Z" fill="#5f4d3b" fill-rule="evenodd" filter="url(#b15)"/>
<path d="M840.6 305.2 L840.6 305.5 L846.5 314.6 L846.9 321.2 L847.4 326.3 L848.8 333.8 L850.1 338.9 L852.4 346.1 L854.4 351 L858.9 360 L864.5 366.5 L872.8 374.5 L879.6 380 L884.5 383.5 L890.1 386.9 L890.9 388.5 L891.2 388.7 L892 390.3 L892.3 390.5 L893.1 392 L893.4 392.2 L894.2 393.7 L894.5 393.9 L895.3 395.4 L895.6 395.6 L896.3 397.1 L897.8 399.1 L903.1 409.7 L913 412.2 L903.9 394.2 L902.8 393.3 L898.4 390.6 L892.1 386.3 L886.2 381.6 L882.5 378.2 L877.3 372.8 L874.1 369 L869.7 363.1 L867 358.9 L863.5 352.5 L861.4 348.1 L858.8 341.4 L856.2 332.2 L852.1 314.3 L850.9 308.2 L841.6 295.3 L841.9 293.9 L840.9 292.5 L841.3 291.2 L840.3 289.8 L840.7 288.5 L839.7 287.1 L840.1 285.8 L839.1 284.3 L839.5 283 L838.4 281.5 L838.9 280.2 L838.7 279.9 L833.9 295 L835.9 297.7 L836 298.1 Z M1031 377.5 L1039.2 370.3 L1045.2 364 L1050.7 357.4 L1052.4 355 L1047.1 357.5 L1046.2 358.5 L1042.1 364.7 L1037.5 370.6 Z M1068.3 343.9 L1077.1 339.7 L1080.9 324.5 L1080.9 322.9 L1080.2 321.5 L1072.1 311.4 L1072 311.7 L1072.5 312.4 L1072.1 314.1 L1072.6 314.8 L1072.2 316.5 L1072.8 317.2 L1072.3 318.9 L1072.9 319.6 L1072.5 321.3 L1073 321.9 L1072.6 323.6 L1073 324.4 Z M1054.8 268.9 L1057 278.3 L1058.2 288 L1058.8 290.1 L1066.1 299.5 L1065.5 295.5 L1063.2 285.7 L1060.8 278.4 L1056.7 269.2 L1052.2 261.3 Z" fill="#614e3b" fill-rule="evenodd" filter="url(#b15)"/>
<path d="M840.6 305.5 L847.9 316.9 L848.3 323.5 L848.9 328.6 L850.2 336 L851.5 341 L853.8 348.2 L855.8 353 L859.5 360.7 L864.5 366.5 L868.6 370.6 L872.9 374.6 L879.6 380 L884.5 383.5 L890.1 386.9 L890.9 388.5 L891.2 388.7 L892 390.3 L892.3 390.5 L893.1 392 L893.4 392.2 L894.2 393.7 L894.5 393.9 L895.3 395.4 L895.6 395.6 L896.3 397.1 L896.7 397.3 L897.4 398.8 L898.8 400.8 L903.4 409.8 L912.1 412 L904.2 396.4 L903.2 395.6 L898.8 393 L892.6 388.6 L886.7 383.9 L883 380.6 L877.8 375.2 L874.6 371.4 L870.2 365.5 L867.5 361.3 L864.1 355 L862 350.6 L859.4 343.8 L856.8 334.6 L851.4 310.6 L842.3 298 L842.5 296.6 L841.6 295.2 L841.9 293.9 L840.9 292.5 L841.3 291.2 L840.3 289.8 L840.7 288.5 L839.7 287.1 L840.1 285.8 L839.5 284.9 L835.6 297.2 L837.5 300.2 L837.5 300.6 L839.1 302.7 L839.1 303.1 L840.6 305.2 Z M1041.9 367.5 L1045.4 363.9 L1049.4 359 L1047.2 360 L1046.3 361 Z M1076.8 339.9 L1080 326.8 L1080 325.4 L1079.4 324.1 L1072.5 315.4 L1072.2 316.5 L1072.8 317.2 L1072.3 318.9 L1072.9 319.6 L1072.5 321.3 L1073 321.9 L1072.6 323.6 L1073 324.3 L1072.7 325.9 L1073.1 326.9 L1069 343.6 Z M1057 278.3 L1058.2 288 L1058.8 290.1 L1064.7 297.8 L1062.5 288.5 L1060.1 281.2 L1055.2 270.6 Z" fill="#624f3c" fill-rule="evenodd" filter="url(#b15)"/>
<path d="M842.1 307.6 L842.1 307.9 L849.3 319.2 L849.7 325.9 L850.3 330.9 L851.6 338.2 L852.9 343.2 L855.2 350.3 L857.1 355.1 L860.2 361.5 L864.5 366.5 L872.8 374.5 L879.5 379.9 L883.1 382.5 L878.4 377.5 L875.2 373.7 L870.8 367.8 L868.1 363.6 L864.6 357.3 L862.5 352.9 L859.9 346.2 L858.5 341.6 L851.8 313 L843 300.7 L842.9 300 L843.1 299.2 L842.2 297.8 L842.5 296.6 L841.6 295.2 L841.9 293.9 L840.9 292.5 L841.3 291.2 L840.3 289.8 L840.7 288.4 L837.1 299.7 L839.1 302.7 L839.1 303.1 L840.6 305.2 L840.6 305.5 Z M891.9 390 L892.3 390.5 L893.1 392 L893.4 392.2 L894.2 393.7 L894.5 393.9 L895.3 395.4 L895.6 395.6 L896.3 397.1 L896.7 397.3 L897.4 398.8 L899.9 402.4 L903.6 409.9 L911.2 411.8 L904.5 398.6 L903.6 397.9 L899.3 395.3 Z M1072.3 318.9 L1072.9 319.6 L1072.5 321.3 L1073 321.9 L1072.6 323.6 L1073 324.3 L1072.7 325.9 L1073.1 326.6 L1072.8 328.1 L1073.2 329.3 L1069.8 343.3 L1076.6 340 L1079.2 329.1 L1079.2 327.9 L1078.7 326.7 Z M1058.2 288 L1059 290.5 L1062.9 295.4 L1061.9 291.2 L1059.4 284 L1057 278.6 Z" fill="#63503d" fill-rule="evenodd" filter="url(#b15)"/>
<path d="M855.4 263 L853.5 260.8 L852 259.7 L850.2 259.1 L847.6 258.8 L845.8 259.1 L843.9 259.9 L842.2 261 L841 262.4 L839.8 264.8 L839.5 266.7 L839.7 268.5 L840.5 270.8 L842.3 272.8 L843.8 273.9 L845.6 274.5 L848.2 274.8 L850 274.5 L852 273.7 L854 272.2 L855.2 270.7 L855.9 269 L856.3 266.3 L856 264.5 Z" fill="#c4a684" fill-rule="evenodd" filter="url(#b1)"/>
<path d="M842.7 273.1 L845.6 274.5 L847.9 274.8 L850 274.5 L852 273.7 L853.8 272.4 L855.3 270.5 L856.1 268.5 L855.3 266.6 L854 265 L852.6 264.1 L851.1 263.5 L849 263.3 L847.4 263.5 L845.7 264.2 L844.2 265.2 L843.1 266.5 L842.2 268.4 L842 270 L842.2 271.7 Z" fill="#a4896c" fill-rule="evenodd" filter="url(#b1)"/>
<path d="M845.4 274.4 L848.2 274.8 L850 274.5 L851.6 273.9 L853.8 272.4 L855.4 270.3 L854.5 269.2 L853.3 268.4 L851.9 267.9 L850.3 267.7 L848.9 267.9 L847.5 268.4 L846.2 269.4 L845.2 270.5 L844.6 271.8 L844.4 273.2 L844.5 274.1 Z" fill="#967c60" fill-rule="evenodd" filter="url(#b1)"/>
<path d="M847.2 274.7 L850.3 274.4 L852 273.7 L853.6 272.5 L851.5 272.1 L850.3 272.2 L848.2 273.4 L847.5 274.3 Z" fill="#8a7158" fill-rule="evenodd" filter="url(#b1)"/>
<path d="M933.2 389.2 L931.3 386.9 L929.7 385.8 L927.9 385.1 L925.2 384.8 L923.3 385.1 L921.4 385.9 L919.3 387.5 L918.1 389.1 L917.3 390.9 L917 393.6 L917.3 395.5 L918.1 397.3 L919.9 399.4 L921.5 400.5 L923.4 401.2 L926.1 401.5 L928 401.1 L929.8 400.4 L932 398.7 L933.2 397.2 L933.9 395.4 L934.2 392.6 L933.9 390.7 Z" fill="#c4a684" fill-rule="evenodd" filter="url(#b1)"/>
<path d="M921.1 400.2 L923.4 401.2 L926.1 401.5 L927.8 401.2 L929.6 400.5 L931.6 399.1 L933.2 397.2 L933.6 395.3 L933.3 393.3 L932.6 391.7 L931.5 390.4 L929.7 389.2 L928 388.6 L926.3 388.4 L924.1 388.7 L922.5 389.4 L921.1 390.4 L919.8 392.1 L919.2 393.7 L918.9 395.4 L919.2 397.3 L919.8 398.9 Z" fill="#a4896c" fill-rule="evenodd" filter="url(#b1)"/>
<path d="M921.8 400.6 L923.6 401.3 L925.8 401.5 L928 401.1 L929.8 400.4 L931.6 399.1 L933 397.5 L932.8 396.1 L932.2 394.7 L931.1 393.5 L929.9 392.6 L928.5 392.1 L926.9 391.9 L925.4 392.1 L923.8 392.7 L922.6 393.6 L921.7 394.8 L921 396.3 L920.8 397.7 L921 399.2 Z" fill="#967c60" fill-rule="evenodd" filter="url(#b1)"/>
<path d="M922.8 401 L925.6 401.5 L928 401.1 L930 400.3 L932.1 398.5 L931 396.7 L930 396 L928.8 395.5 L927.5 395.4 L926.3 395.5 L925.1 396 L924.1 396.8 L923.3 397.7 L922.8 398.8 L922.7 400 Z" fill="#8a7158" fill-rule="evenodd" filter="url(#b1)"/>
<path d="M924.6 401.4 L928 401.1 L930.7 399.8 L929.1 398.9 L927.2 398.9 L926.3 399.3 L925 400.6 Z" fill="#8e735a" fill-rule="evenodd" filter="url(#b1)"/>
<path d="M987.9 191.4 L986 189.2 L984.5 188.3 L982.6 187.6 L980.2 187.4 L978.4 187.7 L976.8 188.3 L974.7 189.7 L973.3 191.6 L972.6 193.1 L972.4 194.9 L972.7 197.5 L973.5 199.2 L974.7 200.6 L977.1 202.2 L978.7 202.8 L980.8 203 L982.9 202.7 L984.5 202.1 L986.8 200.4 L988 199 L988.7 197.3 L989 194.6 L988.6 192.8 Z" fill="#c4a684" fill-rule="evenodd" filter="url(#b1)"/>
<path d="M974.7 200.6 L976.6 202 L978.7 202.8 L980.8 203 L982.9 202.7 L985 201.9 L986.8 200.4 L988 198.9 L987.7 197.1 L986.8 195.3 L985.7 194.1 L984.3 193.2 L982.4 192.5 L980.8 192.4 L979 192.6 L977.4 193.2 L976.1 194.2 L974.7 195.7 L974.1 197.2 L973.9 198.9 L974 199.8 Z" fill="#a4896c" fill-rule="evenodd" filter="url(#b1)"/>
<path d="M976.4 201.9 L978.7 202.8 L981.2 203 L982.9 202.7 L984.5 202.1 L986.5 200.7 L986.1 199.8 L985.2 198.8 L984 198 L982.5 197.5 L981 197.3 L979.6 197.5 L978.3 198 L977 198.9 L976.1 200 L975.5 201.3 Z" fill="#967c60" fill-rule="evenodd" filter="url(#b1)"/>
<path d="M979.1 202.8 L980.8 203 L983.3 202.6 L981.3 202.2 L980.1 202.3 Z" fill="#8a7158" fill-rule="evenodd" filter="url(#b1)"/>
<path d="M1069.2 312.6 L1067.3 310.4 L1065.7 309.3 L1063.8 308.7 L1061.2 308.4 L1059.6 308.7 L1057.8 309.4 L1055.6 310.9 L1054.2 312.9 L1053.6 314.4 L1053.3 316.3 L1053.7 319 L1054.6 320.7 L1055.8 322.2 L1058.2 323.9 L1059.9 324.5 L1062.1 324.7 L1064.1 324.4 L1065.9 323.8 L1068.3 322 L1069.4 320.4 L1070.1 318.7 L1070.3 315.9 L1069.9 314.1 Z" fill="#c4a684" fill-rule="evenodd" filter="url(#b1)"/>
<path d="M1054.5 320.5 L1056 322.4 L1057.8 323.7 L1059.9 324.5 L1062.5 324.7 L1064.1 324.4 L1065.9 323.8 L1067.9 322.4 L1068.6 321.2 L1068.8 319.2 L1068.5 317.5 L1067.8 316 L1066.4 314.4 L1064.9 313.4 L1063.3 312.8 L1061.1 312.6 L1059.5 312.8 L1057.9 313.4 L1056.1 314.8 L1055.1 316.1 L1054.5 317.7 L1054.3 319.5 Z" fill="#a4896c" fill-rule="evenodd" filter="url(#b1)"/>
<path d="M1055.8 322.2 L1058.2 323.9 L1059.9 324.5 L1062.1 324.7 L1064.1 324.4 L1066.2 323.7 L1067.1 323 L1067.2 322.1 L1066.9 320.6 L1066.3 319.3 L1065.3 318.2 L1063.9 317.3 L1062.5 316.8 L1061 316.6 L1059.5 316.8 L1058.1 317.4 L1056.8 318.3 L1055.9 319.5 L1055.3 320.9 L1055.3 321.6 Z" fill="#967c60" fill-rule="evenodd" filter="url(#b1)"/>
<path d="M1057.6 323.5 L1059.9 324.5 L1061.7 324.7 L1064.1 324.4 L1065.4 324 L1064.9 322.8 L1064.1 321.9 L1063.1 321.2 L1061.9 320.8 L1060.7 320.6 L1059.4 320.8 L1058.3 321.3 L1057.4 322 L1056.6 322.9 Z" fill="#8a7158" fill-rule="evenodd" filter="url(#b1)"/>
<path d="M1021.7 253.9 L1019.5 250.7 L1014.8 245 L1009.5 239.8 L1003.8 235.1 L997.6 231 L991 227.4 L984 224.4 L976.8 222.1 L969.4 220.4 L961.9 219.4 L954.3 219.1 L946.7 219.5 L939.1 220.5 L931.7 222.2 L924.5 224.5 L917.5 227.5 L910.9 231.1 L904.7 235.2 L898.9 239.9 L893.6 245.1 L888.9 250.8 L884.8 256.9 L881.3 263.3 L878.6 269.9 L876.5 276.8 L875.2 283.9 L874.6 291.2 L874.7 298.4 L875.7 305.6 L877.4 312.7 L879.8 319.7 L881.4 323.2 L884.9 329.5 L886.9 332.7 L891.5 338.6 L896.7 344.1 L902.4 349.1 L908.7 353.6 L915.4 357.4 L922.5 360.6 L929.9 363.2 L937.6 365 L945.4 366.1 L953.3 366.5 L961.2 366.2 L969.1 365.1 L976.8 363.3 L984.2 360.8 L991.4 357.7 L998.2 353.9 L1004.6 349.5 L1010.4 344.5 L1015.7 339 L1020.4 333.1 L1024.4 326.8 L1027.7 320.1 L1030.3 313 L1032.2 305.9 L1033.2 298.6 L1033.5 291.4 L1033 284.1 L1031.7 277 L1029.7 270 L1027 263.2 L1025.3 260 Z" fill="#bea07f" fill-rule="evenodd" filter="url(#b2)"/>
<path d="M896.7 344.1 L902.4 349.1 L908.7 353.6 L912.2 355.7 L919.1 359.2 L926.4 362.1 L933.9 364.2 L941.7 365.7 L949.4 366.4 L957.3 366.4 L965.2 365.7 L973 364.3 L977 363.3 L984.2 360.8 L991.4 357.7 L998.2 353.9 L1004.6 349.5 L1010.4 344.5 L1013.3 341.7 L1018.2 336 L1022.6 329.8 L1025.9 323.9 L1028.5 317.7 L1030.7 310.9 L1032.1 303.8 L1032.6 300.1 L1032.8 292.9 L1032.3 285.7 L1031.1 278.7 L1029.1 271.8 L1026.4 265.1 L1023 258.7 L1019 252.7 L1014.3 247.1 L1009.2 242 L1003.5 237.3 L997.3 233.2 L990.8 229.7 L983.9 226.7 L976.8 224.4 L973.2 223.5 L965.9 222.2 L958.4 221.6 L950.7 221.6 L943.4 222.2 L939.6 222.8 L932.3 224.5 L925 226.8 L918.2 229.7 L911.6 233.3 L905.4 237.4 L899.9 241.9 L897.2 244.5 L892.2 249.8 L887.8 255.6 L884.1 261.8 L880.9 268.3 L878.5 275.1 L876.8 282 L875.8 289.1 L875.6 296.5 L876.2 303.6 L877.5 310.7 L879.6 317.6 L882.4 324.3 L886 330.8 L890.2 336.8 L892.5 339.7 Z" fill="#a68b6d" fill-rule="evenodd" filter="url(#b2)"/>
<path d="M896.8 344.3 L902.6 349.3 L908.9 353.7 L915.6 357.5 L922.5 360.6 L929.9 363.2 L937.6 365 L941.7 365.7 L949.5 366.4 L957.5 366.4 L965.2 365.7 L973 364.3 L977 363.3 L984.2 360.8 L991.4 357.7 L998.2 353.9 L1004.6 349.5 L1010.4 344.5 L1013.3 341.7 L1018.2 336 L1022.6 329.8 L1025.6 324.5 L1027.9 318.9 L1030.1 312.2 L1031.5 305.2 L1031.9 301.5 L1032.2 294.4 L1031.7 287.3 L1030.5 280.4 L1028.5 273.7 L1025.9 267.1 L1022.6 260.8 L1018.6 254.8 L1014 249.3 L1008.9 244.2 L1003.3 239.6 L997.1 235.4 L990.6 231.9 L983.9 229 L976.8 226.8 L973.2 225.9 L966 224.6 L958.6 223.9 L951.1 223.9 L943.6 224.6 L936.2 225.9 L929.2 227.8 L925.7 229 L918.9 231.9 L912.4 235.4 L906.3 239.5 L900.5 244.2 L895.4 249.3 L890.8 254.7 L888.8 257.6 L885 263.7 L881.9 270.1 L879.6 276.8 L877.9 283.7 L876.9 290.7 L876.7 297.9 L877.3 305 L878.6 312 L880.7 318.8 L883.4 325.5 L886.9 331.8 L891.1 337.8 L893.4 340.7 Z" fill="#947b60" fill-rule="evenodd" filter="url(#b2)"/>
<path d="M899.5 346.7 L905.5 351.4 L912 355.6 L915.6 357.5 L922.7 360.7 L930.1 363.2 L937.6 365 L941.7 365.7 L949.5 366.4 L957.5 366.4 L965.2 365.7 L973 364.3 L977 363.3 L984.2 360.8 L991.4 357.7 L998.2 353.9 L1004.6 349.5 L1010.4 344.5 L1013.3 341.7 L1018.2 336 L1022.6 329.8 L1025.3 325.1 L1027.4 320.2 L1029.5 313.4 L1030.9 306.4 L1031.5 299.6 L1031.4 292.6 L1031.1 288.9 L1029.8 282.1 L1027.9 275.3 L1025.3 268.8 L1022 262.6 L1018 256.7 L1013.5 251.2 L1008.4 246.2 L1002.9 241.7 L996.9 237.6 L990.5 234.2 L983.8 231.3 L976.8 229 L973.2 228.2 L966.1 226.9 L958.7 226.2 L951.3 226.2 L944 226.9 L940.4 227.4 L933.2 229.1 L926.1 231.4 L919.4 234.2 L913 237.7 L906.9 241.7 L901.4 246.2 L898.8 248.6 L894 253.9 L889.7 259.6 L886 265.6 L882.9 272.1 L880.6 278.7 L878.9 285.5 L878 292.4 L877.8 299.3 L878 302.8 L878.9 309.7 L880.5 316.6 L882.9 323.2 L886.1 329.8 L889.8 335.9 L894.2 341.6 Z" fill="#846d54" fill-rule="evenodd" filter="url(#b2)"/>
<path d="M899.6 346.8 L905.7 351.5 L912.2 355.7 L919.1 359.2 L926.2 362 L930.1 363.2 L937.8 365 L945.6 366.2 L953.3 366.5 L961.2 366.2 L965.4 365.7 L973 364.3 L980.5 362.2 L987.9 359.3 L991.6 357.6 L998.2 353.9 L1004.6 349.5 L1010.4 344.5 L1013.3 341.7 L1018.2 336 L1022.6 329.8 L1025 325.6 L1026.8 321.4 L1028.9 314.7 L1030.2 307.8 L1030.9 301 L1030.8 294.1 L1030.4 290.5 L1029.2 283.7 L1027.3 277.1 L1024.7 270.7 L1021.4 264.5 L1017.6 258.7 L1013.1 253.3 L1008.1 248.3 L1002.6 243.8 L996.7 239.8 L990.3 236.4 L983.7 233.6 L976.8 231.3 L973.3 230.5 L966.2 229.2 L958.9 228.5 L951.5 228.5 L944.3 229.2 L940.7 229.7 L933.6 231.3 L926.6 233.6 L920 236.4 L913.6 239.9 L907.7 243.9 L902.2 248.3 L899.6 250.7 L894.8 255.9 L890.6 261.5 L887 267.5 L883.9 273.8 L881.6 280.4 L880 287.1 L879 293.9 L878.9 300.7 L879 304.2 L879.9 311.1 L881.6 317.8 L883.9 324.4 L887 330.8 L890.7 336.9 L895.1 342.5 Z" fill="#746049" fill-rule="evenodd" filter="url(#b2)"/>
<path d="M902.4 349.1 L908.7 353.6 L915.4 357.4 L919.1 359.2 L926.4 362.1 L933.9 364.2 L941.5 365.7 L945.6 366.2 L953.5 366.5 L961.2 366.2 L969.1 365.1 L976.8 363.3 L980.7 362.1 L987.9 359.3 L994.9 355.9 L1001.4 351.7 L1004.7 349.4 L1010.4 344.5 L1015.7 339 L1020.4 333.1 L1024.4 326.8 L1026.2 322.6 L1028.2 316 L1029 312.6 L1030 305.8 L1030.2 302.4 L1030.1 295.5 L1029.3 288.7 L1027.8 282.1 L1025.5 275.7 L1022.7 269.4 L1019.1 263.5 L1015 258 L1010.3 252.8 L1005.1 248.1 L999.5 243.9 L993.3 240.2 L986.9 237.1 L980.2 234.6 L973.3 232.7 L969.8 232 L962.7 231.1 L955.5 230.7 L948.2 231.1 L941.1 232 L937.5 232.7 L930.6 234.6 L923.9 237.2 L917.4 240.3 L911.4 243.9 L905.7 248.1 L900.4 252.8 L895.7 257.9 L893.5 260.6 L889.6 266.4 L886.3 272.4 L883.7 278.7 L881.7 285.3 L880.5 292 L879.9 298.8 L880.1 305.7 L881 312.4 L882.6 319.1 L884.9 325.6 L887.9 331.8 L889.7 334.9 L893.7 340.7 L896.7 344.1 Z" fill="#66533f" fill-rule="evenodd" filter="url(#b2)"/>
<path d="M902.6 349.3 L908.9 353.7 L915.4 357.4 L919.1 359.2 L926.4 362.1 L933.9 364.2 L941.5 365.7 L945.6 366.2 L953.5 366.5 L961.2 366.2 L965.4 365.7 L973 364.3 L980.5 362.2 L987.9 359.3 L991.6 357.6 L998.2 353.9 L1004.6 349.5 L1010.4 344.5 L1013.3 341.7 L1018.2 336 L1022.6 329.8 L1024.4 326.8 L1026.7 320.5 L1027.6 317.2 L1029 310.5 L1029.6 303.8 L1029.6 300.4 L1029.2 293.7 L1028 287 L1026.2 280.6 L1023.6 274.3 L1020.4 268.3 L1016.6 262.6 L1012.3 257.3 L1007.4 252.5 L1002 248.1 L996.2 244.2 L990 240.8 L983.5 238 L976.8 235.8 L973.3 235 L966.3 233.7 L959.2 233.1 L952.1 233.1 L945 233.7 L941.4 234.3 L934.5 235.9 L927.7 238.1 L921.2 240.8 L915 244.2 L909.1 248.1 L903.7 252.5 L901.2 254.8 L896.5 259.9 L892.4 265.4 L888.9 271.2 L885.9 277.3 L883.6 283.7 L882.1 290.3 L881.2 296.9 L881 303.6 L881.1 307 L882 313.7 L883.6 320.3 L885.9 326.7 L888.9 332.9 L892.5 338.8 L894.6 341.6 L896.8 344.3 Z" fill="#6e5944" fill-rule="evenodd" filter="url(#b2)"/>
<path d="M905.5 351.4 L908.9 353.7 L915.6 357.5 L922.7 360.7 L929.9 363.2 L933.9 364.2 L941.7 365.7 L949.5 366.4 L957.3 366.4 L965.2 365.7 L969.3 365.1 L976.8 363.3 L984.2 360.8 L991.4 357.7 L995 355.8 L1001.4 351.7 L1007.5 347.1 L1013.1 341.8 L1015.8 338.9 L1020.4 333.1 L1024 327.3 L1026.1 321.7 L1027 318.5 L1027.8 315.2 L1028.7 308.6 L1029 305.2 L1028.9 298.6 L1028.1 292 L1026.6 285.5 L1024.4 279.2 L1021.6 273.1 L1018.1 267.3 L1014.1 261.9 L1009.5 256.9 L1004.4 252.3 L998.9 248.2 L993 244.6 L986.7 241.5 L980.1 239.1 L973.4 237.2 L969.9 236.5 L962.9 235.6 L955.8 235.3 L952.3 235.4 L945.3 236 L938.3 237.2 L931.5 239.1 L924.9 241.6 L918.7 244.6 L912.7 248.2 L907.1 252.3 L902 256.9 L899.6 259.3 L895.3 264.5 L891.5 270.1 L888.3 276 L885.7 282.2 L883.8 288.6 L882.6 295.1 L882 301.8 L882.2 308.4 L882.5 311.7 L883.8 318.3 L885.7 324.7 L888.3 331 L891.6 337 L896.8 344.2 L899.6 346.8 Z" fill="#756049" fill-rule="evenodd" filter="url(#b2)"/>
<path d="M905.7 351.5 L912.2 355.7 L918.9 359.1 L922.7 360.7 L930.1 363.2 L937.8 365 L945.4 366.1 L949.5 366.4 L957.5 366.4 L965.2 365.7 L969.3 365.1 L976.8 363.3 L984.2 360.8 L991.4 357.7 L995 355.8 L1001.4 351.7 L1007.5 347.1 L1013.1 341.8 L1015.8 338.9 L1020.4 333.1 L1023.7 327.8 L1026.4 319.7 L1027.2 316.5 L1028.1 309.9 L1028.3 306.6 L1028.3 300.1 L1027.5 293.5 L1026 287.1 L1023.8 280.9 L1021 274.9 L1017.6 269.2 L1013.7 263.8 L1009.1 258.9 L1004.1 254.3 L998.6 250.3 L992.8 246.7 L986.6 243.7 L980.1 241.3 L973.4 239.5 L970 238.8 L963 237.8 L956.1 237.5 L952.6 237.6 L945.6 238.2 L938.7 239.5 L932 241.3 L925.5 243.7 L919.3 246.7 L913.4 250.3 L907.9 254.3 L902.8 258.9 L900.5 261.3 L896.2 266.4 L892.4 272 L889.2 277.8 L886.7 283.9 L884.8 290.2 L883.6 296.7 L883.1 303.2 L883.2 309.8 L883.6 313.1 L884.8 319.5 L886.7 325.9 L889.3 332.1 L892.5 338 L897.2 344.6 L902.4 349.1 Z" fill="#7d664f" fill-rule="evenodd" filter="url(#b2)"/>
<path d="M908.7 353.6 L912.2 355.7 L919.1 359.2 L926.4 362.1 L933.7 364.2 L937.8 365 L945.6 366.2 L953.3 366.5 L957.5 366.4 L965.2 365.7 L969.3 365.1 L976.8 363.3 L984.2 360.8 L991.4 357.7 L995 355.8 L1001.4 351.7 L1007.5 347.1 L1013.1 341.8 L1015.8 338.9 L1020.4 333.1 L1023.4 328.4 L1025.8 321 L1026.6 317.8 L1027.5 311.3 L1027.7 308 L1027.6 301.5 L1026.9 295.1 L1025.4 288.8 L1023.3 282.6 L1020.5 276.7 L1017.2 271.1 L1013.2 265.8 L1008.7 260.8 L1003.8 256.4 L998.4 252.4 L992.6 248.9 L986.5 245.9 L980 243.5 L973.4 241.7 L970 241 L963.2 240.1 L956.3 239.8 L952.8 239.8 L945.9 240.4 L939.1 241.7 L932.5 243.5 L926 245.9 L919.9 248.9 L914 252.4 L908.6 256.4 L903.6 260.8 L901.3 263.2 L897 268.3 L893.3 273.8 L890.2 279.6 L887.7 285.6 L886.7 288.7 L885.1 295 L884.3 301.4 L884.1 307.9 L884.6 314.4 L885.1 317.6 L886.6 323.9 L888.9 330.1 L891.7 336.1 L895.2 341.8 L897.6 345 L902.6 349.3 Z" fill="#846d54" fill-rule="evenodd" filter="url(#b2)"/>
<path d="M909.6 352.4 L916.2 356.2 L923.1 359.2 L926.8 360.6 L934.2 362.8 L941.9 364.2 L949.5 364.9 L953.5 365 L961.1 364.7 L965.1 364.2 L972.6 362.9 L980.1 360.7 L983.9 359.4 L990.8 356.3 L994.3 354.5 L1000.6 350.5 L1006.6 345.9 L1012.1 340.8 L1014.7 337.9 L1019.2 332.2 L1021.7 328.2 L1022.9 324.9 L1024.5 318.7 L1025 315.6 L1025.6 309.4 L1025.7 306.2 L1025.2 300 L1024.2 293.8 L1022.4 287.8 L1021.3 284.9 L1018.7 279.2 L1015.4 273.7 L1011.6 268.6 L1007.3 263.9 L1002.5 259.6 L997.3 255.7 L991.7 252.3 L985.7 249.4 L979.5 247.1 L973.1 245.3 L963.2 243.8 L956.5 243.5 L949.8 243.8 L939.8 245.3 L933.4 247.1 L927.1 249.4 L921.2 252.3 L915.5 255.7 L910.3 259.6 L905.4 263.9 L903.2 266.2 L899.1 271.1 L895.5 276.4 L892.5 282 L890.1 287.8 L888.3 293.8 L887.1 299.9 L886.6 306.1 L886.8 312.4 L887.1 315.5 L888.2 321.7 L890.1 327.7 L892.5 333.6 L895.6 339.2 L899.1 344.3 L903.5 348.1 Z" fill="#a38769" fill-rule="evenodd" filter="url(#b3)"/>
<path d="M987.6 288.7 L986.1 286.6 L983.4 283.4 L979.7 280.1 L976.1 277.7 L973.8 276.5 L969.8 274.7 L967.2 273.9 L960.3 272.5 L955.8 272.3 L953.1 272.4 L948.7 273 L946.1 273.6 L941.9 275 L939.5 276 L935.6 278.1 L933.4 279.6 L930.1 282.4 L928.2 284.2 L924.2 289.4 L922.9 291.7 L921.2 295.5 L920.4 297.9 L919.6 302 L919.3 304.6 L919.3 308.7 L919.6 311.3 L920.4 315.3 L922.1 319.9 L924.3 323.8 L926.8 327.3 L928.6 329.3 L931.8 332.2 L933.9 333.8 L937.7 336.1 L940.2 337.3 L944.3 338.8 L947 339.5 L951.4 340.3 L954.2 340.5 L958.7 340.4 L961.4 340.2 L965.8 339.3 L968.5 338.5 L972.6 336.8 L976.8 334.5 L979 333 L982.3 330.2 L984.2 328.3 L986.9 324.9 L988.3 322.7 L990.2 318.9 L991.2 316.5 L992.3 312.5 L992.7 309.9 L992.9 305.8 L992.7 303.2 L992 299.1 L990.7 294.8 L989.7 292.4 Z M978.5 295.6 L979.8 298.4 L980.7 301.3 L981.3 305.8 L980.9 310.3 L979.5 314.7 L977.3 318.7 L974.2 322.3 L970.4 325.3 L966 327.5 L961.3 328.9 L956.3 329.5 L951.3 329.1 L946.5 327.8 L942.1 325.7 L938.2 322.8 L935.1 319.3 L933.4 316.7 L932.2 313.9 L931 309.5 L930.9 305 L931.6 300.5 L933.3 296.3 L935.9 292.4 L939.3 289.1 L943.2 286.4 L946.2 285 L950.9 283.6 L955.8 283.1 L959.1 283.3 L963.9 284.2 L968.4 286 L972.4 288.6 L975.8 291.8 Z" fill="#967c61" fill-rule="evenodd" filter="url(#b1)"/>
<path d="M922.1 319.8 L925.4 325.5 L927 327.6 L930 330.7 L933.9 333.8 L937.7 336.1 L940.2 337.3 L944.3 338.8 L946.9 339.5 L951.4 340.3 L954.1 340.5 L961.1 340.2 L963.8 339.7 L968.1 338.6 L970.7 337.6 L974.7 335.7 L979 333 L982.3 330.2 L984.2 328.3 L986.9 324.9 L988.3 322.7 L991.1 316.8 L991.8 314.3 L992.6 310.6 L992.5 305.4 L991.3 299.3 L990.4 296.9 L988.6 293.1 L987.3 291 L984.8 287.6 L983.1 285.8 L979.7 282.8 L976.2 280.4 L973.8 279.1 L967.4 276.6 L963.1 275.6 L960.5 275.2 L956.1 275.1 L951.5 275.4 L944.6 276.9 L942.1 277.8 L938.2 279.7 L934.3 282.1 L932.3 283.7 L929.2 286.5 L927.5 288.5 L925 291.9 L923.8 294.1 L922.1 297.9 L921.3 300.2 L920.4 304.3 L920.2 306.8 L920.2 310.9 L920.4 313.3 L921.3 317.4 Z M979.2 297 L980.7 301.3 L981.7 306.4 L981.6 311 L980.6 315.5 L978.6 319.7 L975.8 323.5 L972.2 326.8 L967.9 329.3 L963.2 331 L958.3 331.8 L953.2 331.7 L948.3 330.8 L943.7 328.9 L939.6 326.2 L936.2 322.9 L934.4 320.4 L932.9 317.6 L931.4 313.2 L930.9 308 L931 303.5 L932.1 299.1 L934.1 294.9 L936.9 291.2 L940.5 288.1 L944.7 285.6 L949.3 284 L954.1 283.2 L959.1 283.3 L963.9 284.2 L968.4 286 L972.4 288.6 L975.8 291.8 L977.7 294.3 Z" fill="#806952" fill-rule="evenodd" filter="url(#b1)"/>
<path d="M923 321.6 L925.6 325.8 L930 330.7 L932.1 332.4 L935.6 334.9 L940.2 337.3 L944.3 338.8 L946.9 339.5 L953.8 340.5 L956.6 340.5 L961.1 340.2 L966.2 339.2 L972.6 336.8 L975 335.6 L978.7 333.2 L980.9 331.5 L984 328.5 L987.1 324.6 L989.3 321 L990.4 318.6 L991.7 314.7 L992.3 312.1 L992.3 307.7 L991.1 301.6 L990.2 299.3 L988.5 295.6 L987.2 293.5 L984.7 290.2 L983 288.3 L979.7 285.4 L976.2 283 L973.9 281.8 L967.6 279.3 L960.8 278 L956.4 277.8 L951.8 278.1 L945.1 279.6 L938.8 282.3 L934.9 284.7 L932.9 286.2 L929.9 289.1 L928.2 291 L925.8 294.3 L924.5 296.5 L922.9 300.2 L922.1 302.6 L921.3 306.5 L921 309 L921 313 L921.3 315.5 L922.1 319.5 Z M979.8 298.4 L981.7 305.6 L982.2 308.6 L982.2 313.2 L981.1 317.8 L979.1 322 L976.2 325.9 L972.6 329.1 L968.3 331.7 L963.6 333.4 L958.6 334.2 L953.5 334.2 L948.6 333.2 L944 331.3 L939.8 328.6 L936.4 325.2 L934.5 322.7 L933 319.9 L931.9 317 L931.3 314 L930.9 308 L931 303.5 L932.1 299.1 L934.1 294.9 L936.9 291.2 L940.5 288.1 L944.7 285.6 L947.7 284.4 L950.9 283.6 L955.8 283.1 L960.7 283.5 L965.4 284.7 L969.8 286.8 L973.6 289.6 L976.8 293 L978.5 295.6 Z" fill="#75604b" fill-rule="evenodd" filter="url(#b1)"/>
<path d="M923.1 321.9 L926.8 327.3 L930.2 330.9 L935.6 334.9 L940.2 337.3 L944.3 338.8 L946.9 339.5 L953.8 340.5 L959 340.4 L965.8 339.3 L970.7 337.6 L974.7 335.7 L977 334.4 L982.3 330.2 L985.7 326.5 L988.2 323 L989.4 320.7 L991.8 314.6 L992.2 312.1 L991.4 306 L990.8 303.6 L989.3 299.9 L988.2 297.8 L986 294.4 L984.4 292.5 L981.3 289.4 L978.1 286.8 L975.9 285.5 L969.9 282.6 L963.3 280.9 L956.5 280.5 L951.9 280.8 L947.8 281.6 L941.4 283.9 L937.4 286 L935.3 287.4 L930.4 291.8 L927.8 295 L926.4 297 L924.5 300.6 L923.6 302.8 L922.5 306.7 L922.1 309.1 L921.8 313 L921.9 315.4 L922.4 319.4 Z M980.3 299.8 L982.3 307.7 L982.8 310.8 L982.7 315.4 L981.6 320 L979.6 324.3 L976.7 328.2 L973 331.5 L968.7 334 L964 335.8 L958.9 336.6 L953.8 336.5 L948.9 335.5 L944.2 333.6 L940 330.9 L936.5 327.5 L934.6 324.9 L933.1 322.2 L932 319.2 L931.2 314.6 L930.8 306.5 L931 303.5 L931.6 300.5 L932.7 297.7 L934.1 294.9 L936.9 291.2 L940.5 288.1 L944.7 285.6 L947.7 284.4 L950.9 283.6 L955.8 283.1 L960.7 283.5 L965.4 284.7 L969.8 286.8 L972.4 288.6 L974.8 290.7 L977.7 294.3 L979.2 297 Z" fill="#6d5945" fill-rule="evenodd" filter="url(#b1)"/>
<path d="M924.1 323.6 L926.8 327.3 L930.3 330.9 L935.6 334.9 L940.2 337.3 L946.6 339.4 L951.7 340.3 L958.6 340.4 L963.8 339.7 L970.4 337.8 L975 335.6 L980.6 331.8 L984.2 328.3 L986.9 324.9 L988.3 322.7 L991.1 316.8 L992 313.8 L991.2 308.2 L989.9 304 L988.2 300.4 L986.9 298.3 L983.1 293.6 L978.1 289.4 L974.1 287 L967.9 284.6 L961.6 283.3 L959 283.1 L956.5 283.1 L959.1 283.3 L962.3 283.8 L965.4 284.7 L968.4 286 L972.4 288.6 L974.8 290.7 L976.8 293 L978.5 295.6 L979.8 298.4 L982.8 309.8 L983.3 314.5 L982.9 319.2 L982.1 322.2 L980.9 325.2 L979.2 327.9 L977.1 330.5 L974.8 332.8 L972.1 334.7 L967.6 337.1 L964.3 338.1 L961 338.8 L955.8 339 L950.8 338.3 L947.5 337.3 L944.4 336 L941.6 334.2 L937.8 331 L935.7 328.5 L933.3 324.4 L932.2 321.4 L931.5 318.3 L930.9 305 L931.3 302 L932.7 297.7 L934.1 294.9 L935.9 292.4 L939.3 289.1 L941.8 287.2 L944.7 285.6 L948.8 284.1 L948.2 284.3 L945.8 285 L941.6 286.6 L936 290 L931.1 294.3 L928.5 297.4 L927.2 299.4 L925.3 303 L924.4 305.2 L923.3 308.9 L922.9 311.3 L922.6 315.2 L922.7 317.5 L923.3 321.7 Z" fill="#665340" fill-rule="evenodd" filter="url(#b1)"/>
<path d="M960.3 437.3 L939.2 447.3 L936.6 449.4 L935.4 451.9 L927.2 482.2 L927.1 485.6 L928.2 488.2 L941.8 507.2 L942.3 514 L943.2 520.4 L944.9 529.2 L946.6 535.5 L949.5 544.1 L951.9 550.1 L956 558.4 L959.2 564.2 L964.2 571.9 L968.1 577.2 L972.3 582.2 L978.6 589 L983.5 593.7 L990.7 599.7 L996.1 603.7 L1002.2 607.7 L1013.4 630 L1014.5 631.6 L1016.8 633.4 L1051.3 642.5 L1054.5 642.7 L1057.4 641.4 L1077.3 627.1 L1088.1 626.1 L1100.6 623.7 L1110 621.1 L1121.8 616.6 L1130.4 612.4 L1138.6 607.5 L1146.3 602.1 L1153.7 596 L1160.5 589.4 L1166.7 582.4 L1172.3 574.9 L1177.5 566.4 L1198.8 555.7 L1200.4 554.6 L1202 552.5 L1208.7 519.3 L1208.6 516.2 L1207.2 513.4 L1192.1 494.1 L1190.5 483.9 L1187.5 472.2 L1184.4 463.3 L1179.5 452.4 L1175 444.3 L1169.9 436.6 L1164.2 429.1 L1158 422.1 L1151.3 415.7 L1144.3 409.7 L1136.8 404.3 L1128.3 399 L1117.1 379.3 L1116.1 377.9 L1113.9 376.3 L1081.4 368.4 L1078.4 368.3 L1075.7 369.4 L1057.1 382.1 L1047.3 382.9 L1038.1 384.5 L1026.7 387.4 L1017.9 390.4 L1009.6 394 L1001.6 398.2 L994 402.9 L984.7 409.9 L977.8 416 L971.5 422.5 L965.8 429.4 Z M948.5 458.6 L969.6 448.4 L971.3 446.7 L975.9 439.8 L980.8 433.6 L986.1 427.7 L991.9 422.3 L998 417.3 L1004.5 412.8 L1013.8 407.5 L1021 404.2 L1028.5 401.4 L1038.8 398.5 L1049.3 396.6 L1060.2 395.7 L1062.4 395.2 L1081.4 382.5 L1106.2 388.4 L1117.5 408.2 L1119.3 409.8 L1126.6 414.2 L1133.3 418.8 L1139.7 424 L1145.7 429.6 L1151.3 435.6 L1156.4 442 L1161.1 448.7 L1165.2 455.7 L1169.9 465.6 L1173.6 475.8 L1176.2 486.4 L1177.9 497.3 L1178.5 499.6 L1193.6 519.2 L1188.7 544.2 L1167.4 554.9 L1165.8 556.7 L1161.4 564.1 L1156.6 570.8 L1151.3 577.1 L1145.5 583 L1139.2 588.5 L1132.5 593.4 L1125.4 597.9 L1118 601.7 L1107.6 606 L1096.7 609.2 L1085.6 611.3 L1074 612.3 L1071.6 612.8 L1051.4 627.1 L1025.1 620.3 L1013.7 598 L1011.9 596.3 L1006.8 593.1 L999.8 588.1 L993.2 582.6 L989.1 578.7 L983.3 572.5 L979.7 568.2 L974.8 561.3 L969 551.8 L965.4 544.2 L963.3 539.1 L960.6 531.3 L958.6 523.3 L957.6 518 L956.5 509.9 L956.2 504.1 L955.7 502 L942 482.6 Z" fill="#c4a684" fill-rule="evenodd" filter="url(#b15)"/>
<path d="M990.7 599.7 L996 603.6 L1002.6 608.1 L1013.8 630.4 L1014.8 631.8 L1016.6 633.3 L1051.3 642.5 L1054.2 642.7 L1056.9 641.5 L1076.8 627.2 L1088.1 626.1 L1100.3 623.8 L1109.1 621.3 L1120.9 616.8 L1129.3 612.7 L1137.4 607.9 L1145.2 602.5 L1152.5 596.4 L1159.2 589.9 L1165.2 583.1 L1170.8 575.7 L1176.2 567 L1197.4 556.4 L1198.9 555.4 L1200.4 553.3 L1207 520.4 L1207 517.5 L1205.7 514.9 L1190.6 495.7 L1189 485.5 L1186 473.9 L1182.9 465.1 L1178.1 454.3 L1173.6 446.2 L1168.6 438.6 L1162.9 431.2 L1156.8 424.3 L1150.2 417.9 L1143.2 412 L1135.8 406.6 L1127.3 401.4 L1116.1 381.6 L1115.1 380.3 L1113.2 378.9 L1080.9 371.1 L1078.1 371 L1075.5 372 L1057 384.6 L1047.2 385.5 L1038 387 L1026.8 389.9 L1018 392.9 L1009.9 396.4 L1002 400.6 L994.4 405.3 L985.1 412.2 L978.4 418.2 L972.1 424.7 L966.5 431.5 L961 439.4 L939.9 449.4 L937.9 450.9 L937.4 451.5 L936.3 453.7 L928.1 483.8 L928.1 487 L929.1 489.3 L942.7 508.4 L943.2 515.3 L944.1 521.6 L945.8 530.3 L947.4 536.4 L950.3 545.1 L952.7 550.9 L956.8 559.4 L959.9 564.9 L964.9 572.6 L968.8 577.8 L972.8 582.7 L979.2 589.6 L983.6 593.8 Z M969.2 448.6 L971.3 446.7 L975.9 439.8 L980.8 433.6 L986.1 427.7 L991.9 422.3 L998 417.3 L1004.5 412.8 L1013.8 407.5 L1021 404.2 L1028.5 401.4 L1038.8 398.5 L1049.3 396.6 L1060.2 395.7 L1062.4 395.2 L1081.4 382.5 L1106.2 388.4 L1117.5 408.2 L1119.3 409.8 L1126.6 414.2 L1133.3 418.8 L1139.7 424 L1145.7 429.6 L1151.3 435.6 L1156.4 442 L1161.1 448.7 L1165.2 455.7 L1169.9 465.6 L1173.6 475.8 L1176.2 486.4 L1177.9 497.3 L1178.5 499.6 L1193.6 519.2 L1188.7 544.2 L1188.2 544.4 L1188 545.6 L1166.8 556.3 L1165.2 558 L1160.8 565.3 L1156.1 572 L1150.8 578.3 L1145 584.2 L1138.7 589.6 L1132 594.6 L1125 599 L1117.5 602.9 L1107.1 607.1 L1096.3 610.3 L1085.2 612.4 L1073.7 613.4 L1071.4 613.9 L1051.3 628.2 L1024.8 621.3 L1013.4 599 L1011.6 597.4 L1006.6 594.2 L999.6 589.3 L993.1 583.8 L989 579.9 L983.2 573.7 L979.6 569.4 L974.6 562.6 L971.7 557.8 L968.9 553 L965.3 545.5 L963.2 540.4 L960.5 532.6 L958.5 524.6 L957.5 519.3 L956.5 511.2 L956.1 505.5 L955.6 503.3 L942 484.2 L942.3 483.1 L942 482.6 L948.5 458.6 Z" fill="#a98e71" fill-rule="evenodd" filter="url(#b15)"/>
<path d="M990.8 599.8 L1003 608.4 L1014.2 630.7 L1015.1 632 L1016.7 633.4 L1051.3 642.5 L1054 642.7 L1056.4 641.6 L1076.2 627.3 L1077.3 627.1 L1088.1 626.1 L1100 623.9 L1108.4 621.5 L1120.1 617 L1128.4 613 L1136.4 608.2 L1144.1 602.8 L1151.4 596.9 L1158 590.4 L1164 583.6 L1169.5 576.3 L1174.9 567.6 L1196.1 557 L1197.4 556.1 L1198.9 554.2 L1205.4 521.6 L1205.3 518.9 L1204.1 516.5 L1189.1 497.2 L1187.5 487.1 L1184.5 475.5 L1181.5 466.9 L1176.6 456.1 L1172.2 448.2 L1167.3 440.6 L1161.7 433.3 L1155.6 426.4 L1149.1 420.1 L1142.1 414.3 L1134.8 408.9 L1126.2 403.7 L1115.1 383.9 L1114.2 382.8 L1112.4 381.4 L1080.4 373.6 L1077.8 373.6 L1075.4 374.5 L1056.9 387.1 L1047 388 L1038 389.5 L1026.8 392.3 L1018.2 395.3 L1010.1 398.8 L1002.3 402.9 L994.8 407.6 L985.5 414.5 L978.9 420.4 L972.8 426.8 L967.1 433.6 L961.6 441.5 L940.5 451.5 L938.3 453.4 L937.2 455.5 L929.1 485.4 L929.1 488.3 L930 490.5 L943.6 509.5 L944.1 516.5 L944.9 522.7 L946.7 531.4 L948.3 537.4 L951.2 546 L953.5 551.8 L957.5 560.1 L960.7 565.6 L965.6 573.3 L969.4 578.4 L973.4 583.2 L979.8 590.1 L983.8 593.9 Z M969.4 448.5 L971.3 446.7 L975.9 439.8 L980.8 433.6 L986.1 427.7 L991.9 422.3 L998 417.3 L1004.5 412.8 L1013.8 407.5 L1021 404.2 L1028.5 401.4 L1038.8 398.5 L1049.3 396.6 L1060.2 395.7 L1062.4 395.2 L1081.4 382.5 L1106.2 388.4 L1117.5 408.2 L1119.3 409.8 L1126.6 414.2 L1133.3 418.8 L1139.7 424 L1145.7 429.6 L1151.3 435.6 L1156.4 442 L1161.1 448.7 L1165.2 455.7 L1169.9 465.6 L1173.6 475.8 L1176.2 486.4 L1177.9 497.3 L1178.5 499.6 L1193.6 519.2 L1188.7 544.2 L1188.2 544.4 L1188 545.6 L1187.5 545.8 L1187.3 546.9 L1166.1 557.6 L1164.6 559.3 L1160.3 566.5 L1155.5 573.2 L1150.2 579.5 L1144.5 585.3 L1138.2 590.8 L1131.6 595.7 L1124.5 600.1 L1117.1 604 L1106.7 608.2 L1095.9 611.4 L1084.8 613.5 L1073.4 614.4 L1071.2 614.9 L1051.1 629.2 L1024.4 622.3 L1013.1 600 L1011.4 598.5 L1006.4 595.4 L999.5 590.4 L992.9 584.9 L988.8 581.1 L983 574.9 L979.5 570.6 L974.5 563.8 L971.6 559.1 L968.8 554.2 L965.2 546.8 L963.1 541.7 L960.5 533.9 L958.4 525.9 L957.4 520.6 L956.4 512.5 L956.1 506.9 L955.5 504.8 L942 485.8 L942.3 484.6 L942 484.2 L942.3 483.1 L942 482.6 L948.5 458.6 Z" fill="#967d62" fill-rule="evenodd" filter="url(#b15)"/>
<path d="M996 603.6 L1002.2 607.7 L1003.5 608.8 L1014.6 631.1 L1015.4 632.2 L1016.8 633.4 L1051.3 642.5 L1053.8 642.7 L1055.9 641.8 L1075.7 627.5 L1077.3 627.1 L1088.1 626.1 L1099.8 623.9 L1107.7 621.7 L1119.2 617.3 L1127.5 613.2 L1135.4 608.6 L1143 603.2 L1150.2 597.3 L1156.8 590.9 L1162.7 584.2 L1168.2 576.9 L1173.6 568.2 L1194.8 557.6 L1195.9 556.8 L1197.3 555 L1203.8 522.7 L1203.7 520.2 L1202.6 518 L1187.6 498.8 L1186 488.6 L1183.1 477.3 L1180.1 468.6 L1175.2 457.9 L1170.9 450 L1165.9 442.5 L1160.4 435.3 L1154.4 428.6 L1147.9 422.3 L1141.1 416.5 L1133.8 411.2 L1125.2 405.9 L1114.1 386.2 L1113.3 385.2 L1111.5 383.8 L1079.9 376.2 L1077.5 376.1 L1075.3 377 L1056.8 389.6 L1046.9 390.5 L1038 392 L1026.8 394.8 L1018.3 397.7 L1010.4 401.2 L1002.7 405.2 L995.2 409.9 L986 416.7 L979.5 422.5 L973.4 428.8 L967.9 435.5 L962.2 443.6 L941.1 453.6 L939.3 455.1 L938.2 457 L930.1 487 L930 489.4 L930.9 491.7 L944.4 510.7 L945 517.7 L945.8 523.8 L947.5 532.5 L949.1 538.5 L952 547 L954.3 552.8 L958.2 560.8 L961.3 566.3 L966.3 573.9 L970 579 L974 583.9 L980.2 590.5 L983.9 594 L990.7 599.7 Z M969.6 448.4 L971.3 446.7 L975.9 439.8 L980.8 433.6 L986.1 427.7 L991.9 422.3 L998 417.3 L1004.5 412.8 L1013.8 407.5 L1021 404.2 L1028.5 401.4 L1038.8 398.5 L1049.3 396.6 L1060.2 395.7 L1062.4 395.2 L1081.4 382.5 L1106.2 388.4 L1117.5 408.2 L1119.3 409.8 L1126.6 414.2 L1133.3 418.8 L1139.7 424 L1145.7 429.6 L1151.3 435.6 L1156.4 442 L1161.1 448.7 L1165.2 455.7 L1169.9 465.6 L1173.6 475.8 L1176.2 486.4 L1177.9 497.3 L1178.5 499.6 L1193.6 519.2 L1188.7 544.2 L1188.2 544.4 L1188 545.6 L1187.5 545.8 L1187.3 546.9 L1186.8 547.2 L1186.6 548.3 L1165.4 559 L1164 560.5 L1159.7 567.7 L1155 574.3 L1149.7 580.6 L1144 586.5 L1137.7 591.9 L1131.1 596.8 L1124 601.2 L1116.6 605.1 L1106.3 609.3 L1095.5 612.5 L1084.4 614.6 L1073 615.5 L1071 616 L1051 630.2 L1024.1 623.2 L1012.7 601 L1011.2 599.6 L1006.2 596.5 L999.3 591.5 L992.8 586.1 L988.7 582.2 L982.9 576.1 L979.4 571.7 L974.4 565 L971.5 560.3 L968.7 555.5 L965.1 548 L963 542.9 L960.4 535.1 L958.4 527.2 L957.4 521.9 L956.4 513.9 L956 508.3 L955.5 506.3 L942 487.3 L942.3 486.2 L942 485.8 L942.3 484.6 L942 484.2 L942.3 483.1 L942 482.6 L948.5 458.6 Z" fill="#846d55" fill-rule="evenodd" filter="url(#b15)"/>
<path d="M996.1 603.7 L1002.2 607.7 L1003.9 609.2 L1015 631.4 L1015.7 632.5 L1016.9 633.5 L1051.3 642.5 L1053.5 642.7 L1055.4 641.9 L1075.2 627.6 L1077.3 627.1 L1088.1 626.1 L1099.6 623.9 L1107 621.9 L1118.4 617.5 L1126.6 613.5 L1134.5 608.9 L1142 603.6 L1149 597.8 L1155.6 591.4 L1161.5 584.7 L1166.9 577.5 L1172.3 568.8 L1193.5 558.2 L1194.5 557.5 L1195.8 555.8 L1202.2 523.8 L1202.1 521.6 L1201.1 519.5 L1186.1 500.3 L1184.5 490.1 L1181.6 478.9 L1178.6 470.3 L1173.9 459.7 L1169.5 451.9 L1164.6 444.5 L1159.2 437.3 L1153.2 430.7 L1146.8 424.5 L1140 418.7 L1132.9 413.5 L1124.2 408.2 L1113.1 388.5 L1112.4 387.5 L1110.7 386.3 L1079.4 378.8 L1077.2 378.7 L1075.1 379.5 L1056.6 392.1 L1046.7 392.9 L1037.9 394.4 L1026.9 397.2 L1018.5 400.1 L1010.6 403.6 L1002.9 407.6 L995.5 412.1 L986.4 418.9 L980 424.6 L973.9 430.9 L968.5 437.6 L962.8 445.6 L941.8 455.6 L940 457.1 L939 458.9 L931 488.5 L931 490.9 L931.8 492.8 L945.3 511.8 L945.8 518.9 L946.7 525 L948.4 533.5 L950 539.5 L952.8 547.9 L955.1 553.5 L959 561.6 L962 567 L967 574.6 L970.7 579.6 L974.6 584.4 L980.8 591 L984.1 594.2 L990.7 599.7 Z M969.8 448.3 L971.3 446.7 L975.9 439.8 L980.8 433.6 L986.1 427.7 L991.9 422.3 L998 417.3 L1004.5 412.8 L1013.8 407.5 L1021 404.2 L1028.5 401.4 L1038.8 398.5 L1049.3 396.6 L1060.2 395.7 L1062.4 395.2 L1081.4 382.5 L1106.2 388.4 L1117.5 408.2 L1119.3 409.8 L1126.6 414.2 L1133.3 418.8 L1139.7 424 L1145.7 429.6 L1151.3 435.6 L1156.4 442 L1161.1 448.7 L1165.2 455.7 L1169.9 465.6 L1173.6 475.8 L1176.2 486.4 L1177.9 497.3 L1178.5 499.6 L1193.6 519.2 L1188.7 544.2 L1188.2 544.4 L1188 545.6 L1187.5 545.8 L1187.3 546.9 L1186.8 547.2 L1186.6 548.3 L1186.1 548.5 L1185.9 549.6 L1164.7 560.3 L1163.4 561.7 L1159.2 568.8 L1154.5 575.5 L1149.2 581.7 L1143.5 587.6 L1137.2 593 L1130.6 597.9 L1123.6 602.3 L1116.2 606.1 L1105.9 610.4 L1095.1 613.5 L1084.1 615.6 L1072.7 616.6 L1070.8 617 L1050.8 631.2 L1023.7 624.2 L1012.4 602 L1010.9 600.7 L1006 597.6 L999.1 592.6 L992.6 587.2 L988.5 583.4 L982.8 577.2 L979.3 572.9 L974.3 566.1 L971.4 561.5 L968.7 556.7 L965 549.2 L963 544.2 L960.3 536.4 L958.3 528.5 L957.3 523.2 L956.3 515.2 L956 509.7 L955.5 507.8 L942 488.8 L942.3 487.7 L942 487.3 L942.3 486.2 L942 485.8 L942.3 484.6 L942 484.2 L942.3 483.1 L942 482.6 L948.5 458.6 Z" fill="#735f49" fill-rule="evenodd" filter="url(#b15)"/>
<path d="M1002.2 607.7 L1004.3 609.6 L1015.4 631.7 L1016 632.7 L1017 633.5 L1051.3 642.5 L1053.3 642.7 L1054.9 642 L1074.6 627.7 L1077.3 627.1 L1088.1 626.1 L1099.4 624 L1106.3 622 L1117.6 617.7 L1125.7 613.7 L1133.5 609.1 L1140.9 604 L1147.9 598.2 L1154.4 591.9 L1160.3 585.2 L1165.6 578.1 L1171 569.4 L1192.2 558.8 L1193.1 558.2 L1194.3 556.6 L1200.6 525 L1200.6 522.9 L1199.6 520.9 L1184.6 501.8 L1183 491.6 L1180.2 480.4 L1177.2 472 L1172.5 461.4 L1168.2 453.8 L1163.4 446.4 L1157.9 439.3 L1152.1 432.7 L1145.8 426.6 L1139 420.9 L1131.9 415.7 L1123.2 410.4 L1112.1 390.7 L1111.5 389.9 L1109.9 388.7 L1078.9 381.3 L1076.9 381.2 L1075 381.9 L1056.5 394.5 L1046.5 395.3 L1037.9 396.8 L1026.9 399.6 L1018.7 402.5 L1010.8 405.9 L1003.2 409.8 L995.9 414.3 L986.9 421.1 L980.5 426.7 L974.5 432.9 L969.1 439.5 L963.5 447.6 L942.5 457.6 L940.9 458.8 L939.9 460.6 L932 490 L931.9 492.1 L932.7 494 L946.2 512.9 L946.7 520.1 L947.5 526 L949.2 534.6 L950.8 540.4 L953.6 548.8 L955.9 554.4 L959.7 562.4 L962.7 567.7 L967.6 575.2 L971.3 580.2 L975.1 584.9 L981.3 591.5 L984.2 594.3 L990.8 599.8 L996.1 603.7 Z M969.2 448.6 L971.3 446.7 L975.9 439.8 L980.8 433.6 L986.1 427.7 L991.9 422.3 L998 417.3 L1004.5 412.8 L1013.8 407.5 L1021 404.2 L1028.5 401.4 L1038.8 398.5 L1049.3 396.6 L1060.2 395.7 L1062.4 395.2 L1081.4 382.5 L1106.2 388.4 L1117.5 408.2 L1119.3 409.8 L1126.6 414.2 L1133.3 418.8 L1139.7 424 L1145.7 429.6 L1151.3 435.6 L1156.4 442 L1161.1 448.7 L1165.2 455.7 L1169.9 465.6 L1173.6 475.8 L1176.2 486.4 L1177.9 497.3 L1178.5 499.6 L1193.6 519.2 L1188.7 544.2 L1188.2 544.4 L1188 545.6 L1187.5 545.8 L1187.3 546.9 L1186.8 547.2 L1186.6 548.3 L1186.1 548.5 L1185.9 549.6 L1185.4 549.8 L1185.2 550.9 L1164 561.6 L1162.9 562.9 L1158.7 570 L1153.9 576.6 L1148.7 582.9 L1143 588.7 L1136.7 594.1 L1130.1 599 L1123.1 603.4 L1115.7 607.2 L1105.4 611.4 L1094.7 614.6 L1083.7 616.7 L1072.4 617.6 L1070.6 618 L1050.7 632.2 L1023.4 625.1 L1012.1 603 L1010.7 601.7 L1005.8 598.7 L999 593.7 L992.5 588.3 L988.4 584.5 L982.7 578.4 L979.1 574.1 L974.2 567.3 L971.3 562.6 L968.6 557.8 L965 550.4 L962.9 545.4 L960.3 537.6 L958.2 529.7 L957.2 524.4 L956.2 516.4 L955.9 511 L955.5 509.3 L942 490.3 L942.3 489.2 L942 488.8 L942.3 487.7 L942 487.3 L942.3 486.2 L942 485.8 L942.3 484.6 L942 484.2 L942.3 483.1 L942 482.6 L948.5 458.6 Z" fill="#64513e" fill-rule="evenodd" filter="url(#b15)"/>
<path d="M1002.3 607.8 L1004.7 609.9 L1015.8 632 L1016.3 632.9 L1017.1 633.5 L1051.3 642.5 L1053 642.7 L1054.4 642.1 L1074.1 627.9 L1077.3 627.1 L1088.1 626.1 L1099.2 624 L1105.6 622.2 L1116.8 618 L1124.8 614 L1132.6 609.4 L1139.9 604.3 L1146.8 598.6 L1153.2 592.4 L1159 585.8 L1164.3 578.7 L1169.8 570 L1191.7 558.9 L1192.8 557.4 L1199.1 526.1 L1199 524.2 L1198.1 522.4 L1183.2 503.3 L1181.6 493.1 L1178.8 482 L1175.9 473.7 L1171.1 463.2 L1166.9 455.6 L1162.1 448.3 L1156.7 441.3 L1150.9 434.8 L1146.8 430.7 L1151.3 435.6 L1156.4 442 L1161.1 448.7 L1165.2 455.7 L1169.9 465.6 L1173.6 475.8 L1176.2 486.4 L1177.9 497.3 L1178.5 499.6 L1193.6 519.2 L1188.7 544.2 L1188.2 544.4 L1188 545.6 L1187.5 545.8 L1187.3 546.9 L1186.8 547.2 L1186.6 548.3 L1186.1 548.5 L1185.9 549.6 L1185.4 549.8 L1185.2 550.9 L1184.7 551.2 L1184.5 552.2 L1163.4 562.9 L1162.3 564.1 L1158.1 571.1 L1153.4 577.7 L1148.2 584 L1142.5 589.8 L1136.3 595.2 L1129.6 600.1 L1122.6 604.4 L1115.3 608.3 L1105 612.5 L1094.3 615.6 L1083.3 617.7 L1072.1 618.6 L1070.4 619 L1050.6 633.2 L1023 626 L1011.8 603.9 L1010.5 602.8 L1005.7 599.7 L998.8 594.8 L992.3 589.4 L988.3 585.6 L982.6 579.5 L979 575.2 L974.2 568.5 L971.2 563.8 L968.5 559 L964.9 551.6 L962.8 546.6 L960.2 538.9 L958.2 531 L957.2 525.7 L956.2 517.7 L955.9 512.3 L955.5 510.7 L942 491.7 L942.3 490.7 L942 490.3 L942.3 489.2 L942 488.8 L942.3 487.7 L942 487.3 L942.3 486.2 L942 485.8 L942.3 484.6 L942 484.2 L942.3 483.1 L942 482.6 L948.5 458.6 L969.8 448.3 L971.3 446.7 L975.9 439.8 L980.8 433.6 L986.1 427.7 L991.9 422.3 L998 417.3 L1004.5 412.8 L1013.8 407.5 L1021 404.2 L1027.1 401.9 L1018.8 404.8 L1011 408.2 L1003.5 412.1 L996.3 416.5 L987.3 423.2 L981 428.8 L975.1 435 L969.7 441.5 L964 449.6 L943.1 459.6 L941.6 460.7 L940.8 462.3 L932.9 491.5 L932.8 493.4 L933.5 495.1 L947 514 L947.5 521.3 L948.3 527.1 L950 535.6 L951.6 541.4 L954.3 549.6 L956.6 555.2 L960.4 563.1 L963.4 568.4 L968.2 575.9 L971.9 580.8 L975.7 585.4 L981.8 592 L984.4 594.4 L990.8 599.8 L996 603.6 Z M1060.2 395.7 L1063.1 394.9 L1079.3 383.9 L1076.6 383.7 L1074.9 384.4 L1057.8 395.9 Z M1117.2 407.9 L1119.3 409.8 L1121.4 411.1 L1111.2 393 L1110.6 392.2 L1109.1 391.1 L1107.5 390.7 Z" fill="#5d4b39" fill-rule="evenodd" filter="url(#b15)"/>
<path d="M1002.6 608.1 L1005.1 610.4 L1016.1 632.4 L1017.1 633.5 L1051.8 642.6 L1052.8 642.7 L1054 642.2 L1073.6 628 L1077.3 627.1 L1088.1 626.1 L1099 624 L1104.9 622.4 L1116 618.2 L1124 614.3 L1131.6 609.7 L1138.9 604.7 L1145.8 599 L1152.1 592.9 L1157.8 586.3 L1163.1 579.3 L1168.6 570.5 L1190.3 559.5 L1191.3 558.2 L1197.5 527.2 L1197.5 525.4 L1196.7 523.8 L1193.5 519.8 L1188.7 544.2 L1188.2 544.4 L1188 545.6 L1187.5 545.8 L1187.3 546.9 L1186.8 547.2 L1186.6 548.3 L1186.1 548.5 L1185.9 549.6 L1185.4 549.8 L1185.2 550.9 L1184.7 551.2 L1184.5 552.2 L1184.1 552.5 L1183.8 553.5 L1162.8 564.1 L1161.8 565.3 L1157.6 572.2 L1152.9 578.8 L1147.7 585.1 L1142 590.9 L1135.8 596.2 L1129.2 601.1 L1122.2 605.5 L1114.8 609.3 L1104.6 613.5 L1094 616.6 L1083 618.7 L1071.8 619.6 L1070.2 620 L1050.5 634.1 L1022.9 627 L1022.6 626.7 L1011.5 604.9 L1010.3 603.8 L1005.5 600.8 L998.7 595.9 L992.2 590.5 L988.1 586.7 L982.5 580.6 L978.9 576.3 L974 569.6 L968.4 560.2 L964.8 552.8 L962.7 547.7 L960.1 540.1 L958.1 532.2 L957.1 526.9 L956.1 519 L955.8 513.6 L955.4 512.2 L942 493.2 L942.3 492.1 L942 491.7 L942.3 490.7 L942 490.3 L942.3 489.2 L942 488.8 L942.3 487.7 L942 487.3 L942.3 486.2 L942 485.8 L942.3 484.6 L942 484.2 L942.3 483.1 L942 482.6 L948.3 459.4 L943.8 461.5 L942.4 462.5 L941.6 464 L933.8 493 L933.7 494.7 L934.4 496.2 L947.8 515.1 L948.4 522.4 L949.2 528.2 L950.8 536.6 L952.4 542.3 L955.1 550.5 L957.4 556 L961.2 563.9 L964.1 569.1 L968.9 576.5 L972.5 581.4 L976.3 586 L982.3 592.5 L990.8 599.8 L996 603.6 Z M1169.9 465.6 L1173.6 475.8 L1176.2 486.4 L1177.9 497.3 L1178.5 499.4 L1181.6 503.6 L1180.2 494.6 L1177.4 483.5 L1174.5 475.3 L1169.8 464.9 L1168.3 462.1 Z M969.2 448.6 L971.3 446.7 L975.9 439.8 L980.8 433.6 L986.1 427.7 L992.2 422 L987.8 425.3 L981.5 430.9 L975.7 437 L970.3 443.4 L965.4 450.5 Z M1062.2 395.3 L1063.1 394.9 L1075.8 386.3 L1074.7 386.8 Z M1117.3 408.1 L1117.8 408.6 L1110.2 395.2 L1109.5 394.3 Z" fill="#5f4c3a" fill-rule="evenodd" filter="url(#b15)"/>
<path d="M1002.2 607.7 L1005.5 610.8 L1016.5 632.7 L1017.2 633.6 L1051.8 642.6 L1052.6 642.7 L1053.5 642.3 L1073.1 628.2 L1077.3 627.1 L1088.1 626.1 L1098.8 624.1 L1104.3 622.6 L1115.2 618.4 L1123.1 614.5 L1130.7 610 L1137.9 605 L1144.7 599.4 L1150.9 593.3 L1156.6 586.8 L1161.8 579.9 L1167.4 571.1 L1189 560.2 L1189.9 559 L1196 528.3 L1195.9 526.7 L1195.2 525.2 L1193 522.4 L1188.7 544.2 L1188.2 544.4 L1188 545.6 L1187.5 545.8 L1187.3 546.9 L1186.8 547.2 L1186.6 548.3 L1186.1 548.5 L1185.9 549.6 L1185.4 549.8 L1185.2 550.9 L1184.7 551.2 L1184.5 552.2 L1184.1 552.5 L1183.9 553.4 L1183.4 553.7 L1183.1 554.8 L1162.1 565.4 L1161.2 566.5 L1157.1 573.4 L1152.4 579.9 L1147.2 586.2 L1141.5 592 L1135.3 597.3 L1128.7 602.2 L1121.8 606.5 L1114.4 610.3 L1104.3 614.5 L1093.6 617.7 L1082.7 619.7 L1071.5 620.6 L1070.1 621 L1050.3 635 L1022.8 627.9 L1022.2 627.4 L1011.1 605.8 L1010 604.8 L1005.3 601.8 L998.5 597 L992.1 591.6 L988 587.7 L982.4 581.7 L978.8 577.4 L973.9 570.7 L968.3 561.3 L964.8 554 L962.7 548.9 L960.1 541.3 L958.1 533.4 L957.1 528.1 L956.1 520.2 L955.8 514.9 L955.4 513.6 L942.1 494.7 L942.2 493.6 L942 493.1 L942.3 492.1 L942 491.7 L942.3 490.7 L942 490.3 L942.3 489.2 L942 488.8 L942.3 487.7 L942 487.3 L942.3 486.2 L942 485.8 L942.3 484.6 L942 484.2 L942.3 483.1 L942 482.6 L947.6 461.9 L944.4 463.4 L943.2 464.4 L942.5 465.7 L934.7 494.4 L934.6 495.9 L935.3 497.4 L948.6 516.2 L949.2 523.6 L950 529.3 L951.6 537.6 L953.2 543.3 L955.9 551.4 L958.1 556.8 L961.9 564.6 L964.8 569.8 L969.5 577.1 L973.1 581.9 L976.8 586.5 L982.8 592.9 L990.8 599.8 L996.1 603.7 Z M1176.2 486.4 L1177.9 497.5 L1178.6 499.8 L1179.5 501 L1178.8 496 L1175.8 484.5 Z M969.4 448.5 L971.3 446.7 L975.9 439.8 L977.9 437.2 L970.9 445.3 L968.3 449.1 Z" fill="#604e3b" fill-rule="evenodd" filter="url(#b15)"/>
<path d="M1003 608.4 L1006 611.3 L1017.2 633.6 L1051.8 642.6 L1053.1 642.3 L1072.6 628.3 L1077.3 627.1 L1088.1 626.1 L1098.6 624.1 L1103.6 622.7 L1114.4 618.6 L1122.3 614.7 L1129.8 610.3 L1136.9 605.3 L1143.6 599.8 L1149.8 593.8 L1155.5 587.3 L1160.6 580.5 L1166.2 571.6 L1187.6 560.8 L1188.4 559.7 L1194.5 529.4 L1194.4 527.9 L1193.8 526.6 L1192.5 524.9 L1188.7 544.2 L1188.2 544.4 L1188 545.6 L1187.5 545.8 L1187.3 546.9 L1186.8 547.2 L1186.6 548.3 L1186.1 548.5 L1185.9 549.6 L1185.4 549.8 L1185.2 550.9 L1184.7 551.2 L1184.5 552.2 L1184.1 552.5 L1183.9 553.4 L1183.4 553.7 L1183.2 554.5 L1182.8 555 L1182.4 556 L1161.5 566.6 L1160.7 567.6 L1156.6 574.5 L1151.9 580.9 L1146.7 587.2 L1141 593 L1134.8 598.4 L1128.2 603.2 L1121.3 607.6 L1113.9 611.4 L1103.9 615.5 L1093.1 618.7 L1082.3 620.7 L1071.3 621.6 L1069.9 621.9 L1050.7 635.7 L1049.6 635.9 L1022.1 628.6 L1010.8 606.7 L1009.8 605.8 L1005.1 602.9 L998.3 598 L992 592.7 L987.9 588.9 L982.3 582.8 L978.7 578.5 L973.9 571.9 L970.9 567.2 L968.2 562.4 L964.6 555.1 L962.6 550 L960 542.5 L958 534.7 L957 529.4 L956 521.5 L955.7 516.2 L955.4 515 L942.1 496.1 L942.2 495 L942 494.4 L942.2 493.6 L942 493.1 L942.3 492.1 L942 491.7 L942.3 490.7 L942 490.3 L942.3 489.2 L942 488.8 L942.3 487.7 L942 487.3 L942.3 486.2 L942 485.8 L942.3 484.6 L942 484.2 L942.3 483.1 L942 482.6 L946.9 464.4 L945.1 465.3 L944 466.1 L943.3 467.4 L935.6 495.8 L935.6 497.2 L936.1 498.5 L949.4 517.2 L950 524.7 L950.8 530.4 L952.4 538.6 L953.9 544.2 L956.6 552.2 L958.8 557.6 L962.5 565.3 L965.4 570.5 L970.1 577.7 L977.4 587 L983.3 593.4 L990.7 599.7 Z" fill="#624f3d" fill-rule="evenodd" filter="url(#b15)"/>
<path d="M961.1 468.5 L959.2 466.1 L957.5 465 L955.7 464.3 L952.9 464 L950.9 464.3 L949.1 465.1 L946.9 466.8 L945.7 468.4 L944.9 470.3 L944.7 473 L945 475 L945.8 476.8 L947.6 479 L949.2 480.1 L951.1 480.9 L953.9 481.1 L955.8 480.8 L957.7 480 L959.9 478.3 L961.1 476.7 L961.8 474.8 L962.1 472 L961.8 470.1 Z" fill="#c4a684" fill-rule="evenodd" filter="url(#b1)"/>
<path d="M950.9 480.8 L953.3 481.1 L955.8 480.8 L958.1 479.8 L959.5 478.7 L960.5 477.4 L961.1 476 L961.3 474.4 L961 472.2 L960.3 470.6 L959.2 469.2 L957.4 467.9 L955.7 467.2 L954 467 L951.8 467.3 L950.1 468 L948.7 469 L947.3 470.8 L946.6 472.4 L946.4 474.1 L946.6 476.3 L947.4 478.1 L948.5 479.5 L949.6 480.3 Z" fill="#a4896c" fill-rule="evenodd" filter="url(#b1)"/>
<path d="M951.1 480.9 L953.3 481.1 L955.8 480.8 L957.9 479.9 L960.1 478 L960.5 476 L960.2 474.3 L959.6 472.9 L958.6 471.7 L957.3 470.7 L955.7 470.1 L954.2 470 L952.6 470.2 L951.1 470.8 L949.8 471.8 L948.9 473 L948.2 474.6 L948 476.1 L948.3 477.6 L948.9 479.1 L949.9 480.3 Z" fill="#967c60" fill-rule="evenodd" filter="url(#b1)"/>
<path d="M950.9 480.8 L953.6 481.1 L955.8 480.8 L957.9 479.9 L959.5 478.7 L959.7 477.6 L959.5 476.4 L959 475.2 L958.2 474.3 L957.1 473.5 L955.9 473 L954.6 472.9 L953.4 473.1 L952.2 473.6 L951.1 474.3 L950.4 475.3 L949.9 476.5 L949.7 477.7 L949.9 479 L950.4 480.1 Z" fill="#8a7158" fill-rule="evenodd" filter="url(#b1)"/>
<path d="M953.1 481.1 L955.6 480.9 L957.9 479.9 L958.8 479.2 L958.3 477.6 L957 476.3 L956.1 475.9 L955.1 475.8 L953.2 476.3 L951.9 477.6 L951.4 479.4 L951.8 481 Z" fill="#8e735a" fill-rule="evenodd" filter="url(#b1)"/>
<path d="M1048.1 610.8 L1046.1 608.4 L1044.4 607.1 L1042.5 606.4 L1039.6 606.1 L1037.5 606.4 L1035.6 607.2 L1033.4 609.1 L1032.2 610.8 L1031.5 612.7 L1031.3 615.6 L1031.6 617.7 L1032.5 619.6 L1034.3 621.8 L1036 623 L1038 623.8 L1040.8 624.1 L1042.9 623.7 L1044.8 622.9 L1047 621.1 L1048.2 619.3 L1049 617.4 L1049.2 614.5 L1048.8 612.5 Z" fill="#c4a684" fill-rule="evenodd" filter="url(#b1)"/>
<path d="M1046.6 611.9 L1045.2 610.1 L1043.6 609 L1041.9 608.3 L1039.6 608.1 L1037.8 608.3 L1036.1 609.1 L1034.3 610.6 L1033.2 612.1 L1032.5 613.8 L1032.3 616.1 L1032.7 618 L1033.4 619.7 L1034.9 621.5 L1036.4 622.6 L1038.2 623.3 L1040.5 623.5 L1042.3 623.2 L1044 622.5 L1045.8 621 L1046.9 619.5 L1047.5 617.8 L1047.7 615.4 L1047.4 613.6 Z" fill="#a4896c" fill-rule="evenodd" filter="url(#b1)"/>
<path d="M1045.4 613.2 L1044.2 611.8 L1042.9 610.8 L1041.4 610.2 L1039.6 610 L1038 610.3 L1036.5 610.9 L1035.1 612 L1034.2 613.3 L1033.6 614.9 L1033.4 616.6 L1033.7 618.3 L1034.4 619.8 L1035.5 621.2 L1036.8 622.2 L1038.4 622.8 L1040.1 623 L1041.8 622.8 L1043.3 622.1 L1044.6 621 L1045.6 619.7 L1046.2 618.1 L1046.3 616.4 L1046 614.7 Z" fill="#967c60" fill-rule="evenodd" filter="url(#b1)"/>
<path d="M1043.2 613.5 L1042.1 612.6 L1040.9 612.1 L1039.5 612 L1038.2 612.1 L1036.9 612.7 L1035.9 613.5 L1035.1 614.6 L1034.6 615.9 L1034.5 617.2 L1034.7 618.6 L1035.3 619.8 L1036.1 620.9 L1037.2 621.8 L1038.5 622.3 L1039.9 622.4 L1041.2 622.3 L1042.5 621.7 L1043.5 620.9 L1044.3 619.8 L1044.8 618.5 L1044.9 617.2 L1044.7 615.8 L1044.1 614.5 Z" fill="#8a7158" fill-rule="evenodd" filter="url(#b1)"/>
<path d="M1042.9 615.9 L1041.4 614.4 L1039.4 613.9 L1038.3 614 L1036.6 615.1 L1035.7 616.8 L1035.6 617.9 L1036.2 619.9 L1036.8 620.7 L1037.7 621.4 L1039.7 621.9 L1040.7 621.8 L1042.4 620.7 L1043.4 618.9 L1043.5 617.9 Z" fill="#8e735a" fill-rule="evenodd" filter="url(#b1)"/>
<path d="M1099.5 388.8 L1097.6 386.5 L1095.9 385.4 L1094.1 384.7 L1091.4 384.5 L1089.4 384.8 L1087.6 385.5 L1085.5 387.3 L1084.3 388.9 L1083.6 390.7 L1083.5 393.4 L1083.9 395.3 L1084.7 397.1 L1086.5 399.1 L1088.2 400.2 L1090 400.9 L1092.7 401.2 L1094.7 400.9 L1096.5 400.1 L1098.7 398.4 L1099.8 396.8 L1100.5 395 L1100.7 392.2 L1100.3 390.3 Z" fill="#c4a684" fill-rule="evenodd" filter="url(#b1)"/>
<path d="M1084.6 396.9 L1086.1 398.8 L1088.4 400.3 L1090 400.9 L1092 401.2 L1094.4 400.9 L1096.7 400 L1097.4 399.4 L1098.1 398.5 L1098.8 396.6 L1098.9 394.9 L1098.6 393.2 L1097.6 391.2 L1096.4 389.9 L1095 388.9 L1092.9 388.2 L1091.2 388 L1089.4 388.3 L1087.4 389.1 L1086.1 390.2 L1085 391.6 L1084.3 393.3 L1084.1 395 Z" fill="#a4896c" fill-rule="evenodd" filter="url(#b1)"/>
<path d="M1084.9 397.3 L1086.3 399 L1088.2 400.2 L1090.3 401 L1092.5 401.2 L1094.4 400.9 L1096.5 400.1 L1097 398.8 L1097.1 397.3 L1096.8 395.7 L1096.1 394.4 L1095.1 393.2 L1093.7 392.3 L1092.3 391.7 L1090.7 391.6 L1089.2 391.8 L1087.8 392.4 L1086.5 393.3 L1085.6 394.5 L1085 395.9 Z" fill="#967c60" fill-rule="evenodd" filter="url(#b1)"/>
<path d="M1085.7 398.4 L1088 400.1 L1090.3 401 L1092.5 401.2 L1095.2 400.6 L1095.3 399.6 L1095.1 398.4 L1094.6 397.3 L1093.7 396.4 L1092.7 395.6 L1091.5 395.2 L1090.2 395.1 L1088.9 395.2 L1087.8 395.7 L1086.8 396.4 L1086.1 397.4 Z" fill="#8a7158" fill-rule="evenodd" filter="url(#b1)"/>
<path d="M1087.2 399.6 L1090.3 401 L1092.2 401.2 L1093.4 401.1 L1092.4 399.5 L1090.7 398.6 L1089.7 398.5 L1087.9 399 Z" fill="#8e735a" fill-rule="evenodd" filter="url(#b1)"/>
<path d="M1190.2 525.2 L1188.2 522.8 L1186.5 521.7 L1184.6 521 L1181.8 520.7 L1179.8 521 L1177.9 521.8 L1175.7 523.7 L1174.6 525.3 L1173.9 527.3 L1173.8 530.1 L1174.2 532.1 L1175.2 533.9 L1177 536 L1178.7 537.2 L1180.7 537.9 L1183.5 538.2 L1185.5 537.9 L1187.4 537.1 L1189.5 535.2 L1190.7 533.5 L1191.3 531.6 L1191.5 528.8 L1191 526.8 Z" fill="#c4a684" fill-rule="evenodd" filter="url(#b1)"/>
<path d="M1174.1 531.6 L1175.2 533.9 L1176.8 535.9 L1179 537.3 L1180.7 537.9 L1182.6 538.2 L1183.9 538 L1185.6 537.3 L1187.2 535.9 L1188.4 534.2 L1188.9 532.5 L1189.1 530.7 L1188.6 528.4 L1187.7 526.8 L1186.5 525.4 L1184.9 524.2 L1183.2 523.6 L1180.9 523.3 L1179.1 523.5 L1177.5 524.2 L1175.7 525.6 L1174.6 527.2 L1174 528.9 L1173.8 530.3 Z" fill="#a4896c" fill-rule="evenodd" filter="url(#b1)"/>
<path d="M1174.2 531.8 L1175.2 533.9 L1176.8 535.9 L1178.7 537.2 L1181.1 538 L1182.4 538.1 L1183.8 537.5 L1185 536.5 L1186 535.1 L1186.5 533.6 L1186.6 532 L1186.3 530.4 L1185.5 528.9 L1184.5 527.6 L1183.1 526.7 L1181.4 526 L1179.9 525.8 L1178.3 526 L1176.7 526.7 L1175.5 527.7 L1174.5 529 L1174 530.6 Z" fill="#967c60" fill-rule="evenodd" filter="url(#b1)"/>
<path d="M1174.2 532.1 L1175.3 534.1 L1176.6 535.7 L1178.5 537.1 L1180.7 537.9 L1181.2 538 L1182 537.7 L1183 536.9 L1183.7 535.8 L1184.1 534.6 L1184.2 533.4 L1183.9 532.1 L1183.3 530.9 L1182.4 529.8 L1181.3 529 L1180 528.5 L1178.7 528.4 L1177.4 528.6 L1176.2 529.1 L1175.2 529.9 L1174.5 530.9 Z" fill="#8a7158" fill-rule="evenodd" filter="url(#b1)"/>
<path d="M1175 533.7 L1176.6 535.7 L1178.7 537.2 L1180.3 537.8 L1181.5 536.6 L1181.8 534.7 L1181.6 533.7 L1180.5 532 L1179.6 531.4 L1177.6 530.9 L1175.7 531.4 L1174.5 532.7 Z" fill="#8e735a" fill-rule="evenodd" filter="url(#b1)"/>
<path d="M1135.6 460.4 L1132.3 455.7 L1129 451.7 L1125.7 448 L1121.6 444.1 L1117.6 440.7 L1113.6 437.7 L1108.8 434.6 L1104.3 432.1 L1099.8 429.9 L1094.5 427.7 L1089.6 426 L1084.8 424.7 L1079.3 423.6 L1074.1 422.8 L1069.2 422.4 L1063.6 422.3 L1058.4 422.6 L1053.5 423.1 L1048 424 L1043 425.2 L1038.3 426.7 L1033.1 428.6 L1028.5 430.7 L1024.2 433 L1019.4 436 L1015.3 438.9 L1011.6 442 L1007.5 445.8 L1004.1 449.5 L1001 453.2 L997.8 457.7 L995.2 462.1 L992.9 466.3 L990.7 471.4 L988.9 476.2 L987.6 480.8 L986.4 486.3 L985.6 491.4 L985.2 496.2 L985.2 501.9 L985.4 507 L986 511.8 L987.1 517.4 L988.4 522.6 L990.1 527.6 L991.9 532.1 L994.4 537.3 L996.9 541.7 L999.8 546.2 L1003.3 550.8 L1006.6 554.7 L1010.4 558.5 L1014.7 562.4 L1018.7 565.6 L1023.2 568.6 L1028.2 571.7 L1032.8 574 L1037.8 576.2 L1043.3 578.2 L1048.3 579.6 L1053.5 580.8 L1059.4 581.7 L1064.5 582.2 L1069.9 582.3 L1075.7 582.1 L1080.8 581.5 L1086.1 580.6 L1091.8 579.2 L1096.6 577.7 L1101.6 575.8 L1106.9 573.3 L1111.2 570.8 L1115.7 568 L1120.3 564.6 L1124.1 561.3 L1127.8 557.6 L1131.6 553.4 L1134.6 549.4 L1137.5 545.1 L1140.3 540.2 L1142.4 535.7 L1144.4 530.9 L1146.1 525.4 L1147.3 520.7 L1148.2 515.6 L1148.8 510 L1149 505.1 L1148.9 499.9 L1148.3 494.2 L1147.5 489.4 L1146.4 484.4 L1144.7 478.9 L1142.9 474 L1140.8 469.5 L1138.4 464.9 Z M1123.4 467.7 L1127.7 475.2 L1131 483.2 L1133.2 491.6 L1133.8 495.8 L1134.4 504.4 L1134.2 508.7 L1132.9 517.2 L1131.9 521.3 L1129 529.4 L1127.1 533.3 L1122.6 540.6 L1119.9 544 L1114 550.3 L1110.7 553.2 L1103.5 558.1 L1099.7 560.3 L1091.6 563.7 L1087.3 565.1 L1078.6 566.9 L1074.2 567.4 L1065.2 567.5 L1060.7 567.1 L1056.3 566.4 L1047.5 564.2 L1043.3 562.6 L1035.1 558.8 L1031.2 556.5 L1024 551.2 L1020.7 548.2 L1014.6 541.6 L1011.9 538.1 L1007.3 530.6 L1003.8 522.6 L1002.4 518.4 L1000.5 510 L999.9 505.7 L999.8 497.1 L1000.1 492.9 L1001.6 484.5 L1002.8 480.5 L1005.9 472.6 L1007.9 468.9 L1012.5 461.9 L1015.2 458.6 L1021.2 452.6 L1024.4 449.9 L1031.5 445.2 L1035.2 443.2 L1043.1 439.9 L1047.2 438.7 L1055.6 437 L1064.2 436.3 L1068.5 436.4 L1077.2 437.4 L1081.4 438.3 L1089.8 440.9 L1093.8 442.5 L1101.5 446.6 L1105.2 449 L1112 454.5 L1115.2 457.5 L1120.9 464.1 Z" fill="#c4a684" fill-rule="evenodd" filter="url(#b15)"/>
<path d="M996.9 541.6 L1000.1 546.6 L1003.3 550.8 L1006.6 554.7 L1010.7 558.8 L1014.7 562.4 L1018.7 565.5 L1023.6 568.9 L1028.2 571.7 L1032.7 574 L1038.1 576.3 L1043.4 578.2 L1048.6 579.7 L1053.5 580.8 L1059.4 581.7 L1064.5 582.2 L1069.9 582.3 L1075.7 582.1 L1080.8 581.5 L1086.1 580.6 L1091.5 579.3 L1097 577.5 L1102 575.6 L1106.5 573.4 L1111.6 570.6 L1115.1 568.3 L1119.3 565.2 L1123.4 561.7 L1126.8 558.3 L1130.2 554.4 L1133.5 550.2 L1136.6 545.5 L1139 541.3 L1141.2 536.7 L1143.3 531.5 L1144.8 526.9 L1146 521.9 L1147 516.5 L1147.5 511.6 L1147.7 506.5 L1147.5 501 L1147.1 496.1 L1146.3 491 L1145 485.6 L1143.6 480.9 L1141.8 476.1 L1139.5 471 L1137.2 466.7 L1134.5 462.3 L1131.3 457.7 L1128.2 453.9 L1124.7 450.1 L1120.6 446.2 L1116.9 443 L1112.7 439.9 L1108 436.8 L1103.8 434.4 L1099.1 432.1 L1093.9 430 L1084.3 427 L1078.8 425.9 L1073.7 425.1 L1068.8 424.7 L1063.6 424.6 L1058.5 424.8 L1053 425.4 L1047.9 426.3 L1043.2 427.4 L1038.3 428.9 L1033.6 430.7 L1028.6 432.9 L1024.3 435.2 L1020 437.9 L1015.6 441 L1011.9 444.1 L1008.2 447.5 L1004.5 451.5 L1001.4 455.2 L998.5 459.2 L995.7 463.9 L993.4 468.1 L991.4 472.7 L989.5 477.9 L988.1 482.8 L987.1 487.4 L986.3 492.8 L985.9 497.7 L985.8 502.8 L986.1 508.4 L986.7 513.5 L987.6 518.2 L989 523.7 L990.6 528.6 L992.5 533.2 L994.8 538 Z M1125.6 471.4 L1129.4 479.2 L1131 483.2 L1133.2 491.6 L1133.8 495.8 L1134.4 504.4 L1134.2 508.7 L1132.9 517.2 L1131.6 522.7 L1128.7 530.8 L1126.8 534.6 L1122.3 542 L1119.6 545.4 L1113.7 551.7 L1110.3 554.5 L1103.2 559.5 L1099.3 561.6 L1091.2 565.1 L1087 566.5 L1078.3 568.3 L1073.8 568.8 L1069.3 569 L1060.4 568.5 L1055.9 567.8 L1047.2 565.6 L1042.9 564 L1034.8 560.2 L1030.9 557.9 L1023.7 552.6 L1020.3 549.6 L1014.3 543 L1011.6 539.5 L1007 531.9 L1005.1 528 L1002 519.8 L1000.9 515.6 L999.6 507.1 L999.4 502.8 L999.8 494.2 L1001.3 485.9 L1002.8 480.5 L1004.2 476.5 L1007.9 468.9 L1010.1 465.3 L1015.2 458.6 L1018.1 455.5 L1024.4 449.9 L1027.9 447.5 L1035.2 443.2 L1039.1 441.5 L1047.2 438.7 L1055.6 437 L1059.9 436.5 L1068.5 436.4 L1072.9 436.8 L1081.4 438.3 L1085.6 439.4 L1093.8 442.5 L1097.7 444.5 L1105.2 449 L1108.7 451.6 L1115.2 457.5 L1118.1 460.7 L1123.4 467.7 Z" fill="#a98e71" fill-rule="evenodd" filter="url(#b15)"/>
<path d="M996.9 541.7 L1000.1 546.6 L1003.3 550.8 L1006.6 554.7 L1010.7 558.8 L1014.7 562.4 L1018.7 565.5 L1023.6 568.9 L1028.2 571.7 L1032.7 574 L1038.1 576.3 L1043.4 578.2 L1048.6 579.7 L1053.5 580.8 L1059.4 581.7 L1064.5 582.2 L1069.9 582.3 L1075.7 582.1 L1080.8 581.5 L1086.1 580.6 L1091.5 579.3 L1097 577.5 L1101.7 575.7 L1106.5 573.5 L1111.6 570.6 L1118.4 565.8 L1122.1 562.6 L1125.8 559 L1129.4 554.9 L1132.6 550.7 L1135.4 546.5 L1137.8 542.2 L1140.2 537.3 L1141.9 532.9 L1143.5 528 L1144.8 523 L1145.7 517.6 L1146.2 512.9 L1146.4 507.8 L1146.3 502.3 L1145.8 497.5 L1145 492.5 L1143.9 487.5 L1142.3 482.2 L1140.5 477.4 L1138.5 473 L1135.9 468.2 L1133.2 463.8 L1130.4 459.8 L1126.9 455.5 L1123.4 451.8 L1119.9 448.4 L1115.7 444.8 L1111.6 441.8 L1107.2 439 L1098.4 434.3 L1093.2 432.2 L1083.8 429.3 L1078.3 428.1 L1068.5 427 L1063.3 426.9 L1058.3 427.1 L1052.8 427.7 L1047.8 428.6 L1043.2 429.7 L1038 431.3 L1033.3 433 L1028.9 435 L1024.5 437.4 L1020.2 440 L1015.8 443.1 L1012.2 446.1 L1008.5 449.5 L1004.9 453.4 L1001.9 457.1 L999 461.1 L996.2 465.7 L994 469.9 L991.9 474.4 L990.1 479.5 L988.7 484.3 L987.7 488.9 L986.9 494.3 L986.5 499.1 L986.4 504.1 L986.7 509.6 L987.3 514.7 L988.2 519.4 L989.6 524.8 L991.2 529.6 L993 534.2 Z M1127.7 475.2 L1131 483.2 L1132.2 487.4 L1133.8 495.8 L1134.2 500.1 L1134.2 508.7 L1133.7 513 L1132.3 519.9 L1129.9 528.1 L1126.5 536 L1124.3 539.7 L1119.3 546.8 L1116.4 550 L1110 555.9 L1106.5 558.5 L1099 563 L1095 564.9 L1086.6 567.8 L1082.3 568.9 L1073.5 570.1 L1069 570.3 L1064.5 570.2 L1055.6 569.1 L1051.2 568.2 L1042.6 565.4 L1038.5 563.6 L1030.6 559.2 L1026.9 556.7 L1020 550.9 L1016.9 547.7 L1011.3 540.8 L1008.8 537.1 L1004.7 529.4 L1003.1 525.3 L1000.6 517 L999.8 512.7 L999 504.1 L999.1 499.9 L1000 491.4 L1001.6 484.5 L1004.2 476.5 L1005.9 472.6 L1010.1 465.3 L1012.5 461.9 L1018.1 455.5 L1021.2 452.6 L1027.9 447.5 L1031.5 445.2 L1039.1 441.5 L1043.1 439.9 L1051.4 437.7 L1059.9 436.5 L1064.2 436.3 L1072.9 436.8 L1077.2 437.4 L1085.6 439.4 L1089.8 440.9 L1097.7 444.5 L1101.5 446.6 L1108.7 451.6 L1112 454.5 L1118.1 460.7 L1120.9 464.1 L1125.6 471.4 Z" fill="#967d62" fill-rule="evenodd" filter="url(#b15)"/>
<path d="M997.1 542 L999.9 546.2 L1003 550.5 L1006.8 554.9 L1010.4 558.6 L1014.4 562.1 L1019 565.8 L1023.2 568.7 L1027.9 571.5 L1032.8 574 L1038.2 576.4 L1043.3 578.2 L1048.2 579.6 L1054 580.9 L1059.4 581.7 L1064.4 582.2 L1070.3 582.3 L1075.8 582 L1080.8 581.5 L1086.1 580.6 L1091.5 579.3 L1097 577.5 L1101.7 575.7 L1106.5 573.5 L1111.6 570.6 L1117.5 566.4 L1121.1 563.2 L1124.8 559.7 L1128.4 555.6 L1131.5 551.5 L1134.3 547.3 L1136.6 543.1 L1139 538.3 L1140.7 533.9 L1142.3 529.1 L1143.5 524.1 L1144.5 518.8 L1145 514.1 L1145.2 509.1 L1145 503.7 L1144.6 499 L1143.8 494 L1142.6 489 L1141.1 483.8 L1139.3 479.1 L1137.3 474.7 L1134.8 469.9 L1132.1 465.6 L1129.3 461.7 L1125.9 457.5 L1122.4 453.7 L1119 450.4 L1114.8 446.9 L1106.7 441.2 L1102.2 438.7 L1097.7 436.5 L1092.6 434.4 L1083.2 431.5 L1077.9 430.4 L1068.1 429.3 L1063 429.1 L1058 429.4 L1052.6 429.9 L1043.1 431.9 L1038 433.4 L1033.3 435.2 L1029 437.1 L1024.6 439.5 L1020.4 442.1 L1016.1 445.2 L1012.5 448.1 L1008.9 451.5 L1005.3 455.3 L1002.3 459 L999.4 463 L996.7 467.5 L994.5 471.6 L992.5 476.1 L990.6 481.1 L989.3 485.9 L988.3 490.4 L987.5 495.7 L987.1 500.4 L987 505.4 L987.3 510.9 L987.9 515.9 L988.8 520.5 L990.2 525.8 L991.8 530.7 L993.6 535.2 Z M1129.4 479.2 L1132.2 487.4 L1133.2 491.6 L1134.2 500.1 L1134.4 504.4 L1133.7 513 L1132.9 517.2 L1131 525.4 L1128 533.4 L1124 541.1 L1121.6 544.7 L1116.1 551.3 L1113 554.4 L1106.2 559.8 L1102.5 562.2 L1094.7 566.2 L1090.6 567.8 L1082 570.2 L1077.6 571 L1068.7 571.7 L1064.2 571.6 L1059.7 571.2 L1050.8 569.5 L1046.5 568.3 L1038.1 564.9 L1034.1 562.9 L1026.5 558 L1023 555.3 L1016.5 549.1 L1013.6 545.7 L1008.5 538.5 L1006.3 534.7 L1002.8 526.6 L1001.4 522.5 L999.5 514.1 L998.9 509.8 L998.8 501.2 L999.7 492.7 L1001.6 484.5 L1002.8 480.5 L1005.9 472.6 L1007.9 468.9 L1012.5 461.9 L1015.2 458.6 L1021.2 452.6 L1024.4 449.9 L1031.5 445.2 L1035.2 443.2 L1043.1 439.9 L1047.2 438.7 L1055.6 437 L1064.2 436.3 L1068.5 436.4 L1077.2 437.4 L1081.4 438.3 L1089.8 440.9 L1093.8 442.5 L1101.5 446.6 L1105.2 449 L1112 454.5 L1115.2 457.5 L1120.9 464.1 L1123.4 467.7 L1127.7 475.2 Z" fill="#846d55" fill-rule="evenodd" filter="url(#b15)"/>
<path d="M997.1 542.1 L1000 546.5 L1003 550.5 L1006.8 554.9 L1010.4 558.6 L1014.4 562.1 L1019 565.8 L1023.2 568.7 L1027.9 571.5 L1032.8 574 L1038.2 576.4 L1043.3 578.2 L1048.2 579.6 L1054 580.9 L1059.4 581.7 L1064.4 582.2 L1070.3 582.3 L1075.8 582 L1080.8 581.5 L1086.1 580.6 L1091.5 579.3 L1097 577.5 L1101.7 575.7 L1106.5 573.5 L1111.6 570.6 L1116.6 567 L1120.2 563.9 L1123.8 560.3 L1127.3 556.3 L1130.4 552.3 L1133.2 548.1 L1135.5 544 L1137.8 539.2 L1139.6 534.9 L1141.1 530.1 L1142.3 525.2 L1143.2 520 L1143.7 515.3 L1143.9 510.4 L1143.8 505 L1143.3 500.4 L1142.6 495.4 L1141.4 490.5 L1139.9 485.4 L1138.1 480.7 L1136.2 476.4 L1133.6 471.7 L1131 467.4 L1128.3 463.6 L1124.9 459.4 L1118 452.4 L1113.9 448.9 L1105.9 443.3 L1101.5 440.8 L1097 438.6 L1092 436.5 L1082.7 433.7 L1077.4 432.6 L1067.8 431.5 L1062.4 431.4 L1057.5 431.6 L1052.5 432.1 L1043.1 434.1 L1038 435.6 L1029.2 439.3 L1024.5 441.7 L1020.4 444.3 L1016.4 447.2 L1012.8 450.1 L1009.2 453.4 L1005.6 457.3 L1002.7 460.8 L999.9 464.8 L997.2 469.2 L995 473.3 L993 477.8 L991.2 482.7 L989.9 487.1 L988.9 491.9 L988.1 497.2 L987.7 501.8 L987.6 506.8 L987.9 512.1 L988.5 516.7 L989.4 521.7 L990.7 526.9 L992.2 531.4 L994.1 536.1 Z M1131 483.2 L1133.2 491.6 L1133.8 495.8 L1134.4 504.4 L1134.2 508.7 L1132.9 517.2 L1130.7 526.7 L1127.7 534.8 L1125.8 538.6 L1121.3 546 L1118.7 549.4 L1112.7 555.7 L1109.4 558.6 L1102.2 563.5 L1098.3 565.7 L1090.2 569.2 L1086 570.5 L1077.3 572.3 L1072.8 572.8 L1068.3 573 L1059.4 572.5 L1054.9 571.8 L1046.2 569.6 L1041.9 568.1 L1033.8 564.2 L1029.9 561.9 L1022.7 556.6 L1019.3 553.6 L1013.3 547.1 L1010.6 543.5 L1006 536 L1004.1 532 L1001.1 523.8 L1000 519.6 L998.6 511.1 L998.4 506.8 L998.8 498.2 L999.4 494 L1001.6 484.5 L1002.8 480.5 L1005.9 472.6 L1007.9 468.9 L1012.5 461.9 L1015.2 458.6 L1021.2 452.6 L1024.4 449.9 L1031.5 445.2 L1035.2 443.2 L1043.1 439.9 L1051.4 437.7 L1059.9 436.5 L1068.5 436.4 L1072.9 436.8 L1081.4 438.3 L1085.6 439.4 L1093.8 442.5 L1097.7 444.5 L1105.2 449 L1108.7 451.6 L1115.2 457.5 L1118.1 460.7 L1123.4 467.7 L1125.6 471.4 L1129.4 479.2 Z" fill="#735f49" fill-rule="evenodd" filter="url(#b15)"/>
<path d="M999.8 546.2 L1003.3 550.9 L1006.8 554.9 L1010.4 558.5 L1014.7 562.4 L1019.1 565.8 L1023.5 568.9 L1027.9 571.5 L1033.1 574.2 L1037.8 576.2 L1042.9 578.1 L1048.3 579.6 L1054 580.9 L1059.4 581.7 L1064.4 582.2 L1070.3 582.3 L1075.8 582 L1080.8 581.5 L1086.1 580.6 L1091.8 579.2 L1097 577.5 L1102 575.6 L1106.5 573.4 L1111.6 570.6 L1115.7 567.6 L1119.3 564.5 L1122.8 561 L1126.3 557 L1129.3 553.1 L1132.1 548.9 L1134.4 544.9 L1136.7 540.1 L1138.5 535.5 L1139.9 531.1 L1141.2 526 L1142 521.2 L1142.5 516.6 L1142.7 511.6 L1142.6 506.4 L1142.1 501.8 L1141.3 496.9 L1140.2 491.7 L1138.8 487.3 L1137.1 482.6 L1134.9 477.8 L1130.1 469.5 L1127 465.1 L1120.7 457.8 L1116.9 454.1 L1109.3 448.1 L1104.9 445.2 L1096.3 440.7 L1091.4 438.7 L1082.2 435.8 L1077 434.7 L1067.4 433.7 L1062.5 433.6 L1057.5 433.8 L1052.3 434.3 L1047.5 435.1 L1042.7 436.3 L1033.7 439.4 L1029 441.5 L1024.7 443.8 L1020.6 446.4 L1013.1 452.1 L1009.3 455.6 L1006 459.1 L1003.2 462.7 L1000.2 466.8 L997.6 471 L995.5 475 L993.4 479.7 L991.8 484.3 L990.5 488.7 L989.4 493.4 L988.7 498.3 L988.3 503.4 L988.2 508.1 L988.5 513 L989.1 518.2 L990 522.8 L991.2 527.6 L992.9 532.7 L994.6 537 L996.7 541.3 Z M1132.2 487.4 L1133.8 495.8 L1134.2 500.1 L1134.2 508.7 L1133.7 513 L1132.9 517.2 L1130.4 528 L1127.4 536.1 L1125.5 539.9 L1121 547.3 L1118.4 550.7 L1112.4 557 L1109.1 559.9 L1101.9 564.9 L1098 567 L1089.9 570.5 L1085.7 571.8 L1076.9 573.6 L1072.5 574.1 L1068 574.3 L1059.1 573.8 L1054.6 573.1 L1045.9 570.9 L1041.6 569.4 L1033.5 565.5 L1029.6 563.2 L1022.4 557.9 L1019 554.9 L1013 548.4 L1010.3 544.8 L1005.7 537.3 L1003.8 533.3 L1000.7 525.1 L999.6 520.9 L998.3 512.4 L998.1 508.1 L998.4 499.6 L1000 491.2 L1002.8 480.5 L1004.2 476.5 L1007.9 468.9 L1010.1 465.3 L1015.2 458.6 L1018.1 455.5 L1024.4 449.9 L1027.9 447.5 L1035.2 443.2 L1039.1 441.5 L1047.2 438.7 L1055.6 437 L1064.2 436.3 L1072.9 436.8 L1077.2 437.4 L1085.6 439.4 L1089.8 440.9 L1097.7 444.5 L1101.5 446.6 L1108.7 451.6 L1112 454.5 L1118.1 460.7 L1120.9 464.1 L1125.6 471.4 L1127.7 475.2 L1131 483.2 Z" fill="#64513e" fill-rule="evenodd" filter="url(#b15)"/>
<path d="M999.9 546.2 L1003.3 550.9 L1006.8 554.9 L1010.4 558.5 L1014.7 562.4 L1019.1 565.8 L1023.5 568.9 L1027.9 571.5 L1033.1 574.2 L1037.8 576.2 L1042.9 578.1 L1048.3 579.6 L1054 580.9 L1059.4 581.7 L1064.4 582.2 L1070.3 582.3 L1075.8 582 L1080.8 581.5 L1086.1 580.6 L1091.8 579.2 L1097 577.5 L1102 575.6 L1106.5 573.4 L1111.2 570.8 L1114.8 568.2 L1118.3 565.1 L1121.9 561.7 L1125.3 557.7 L1128.3 553.8 L1130.8 550 L1133.3 545.7 L1135.5 541.1 L1137.2 536.8 L1138.7 532.1 L1139.9 527.4 L1140.8 522.3 L1141.3 517.8 L1141.5 512.9 L1141.4 507.7 L1140.9 503.1 L1140.2 498.3 L1139 493.2 L1137.6 488.8 L1135.9 484.2 L1133.8 479.5 L1129 471.2 L1126 466.9 L1119.8 459.7 L1116 456.1 L1108.5 450.1 L1104.1 447.2 L1095.6 442.8 L1090.8 440.8 L1081.6 438 L1076.5 436.9 L1067.1 435.8 L1062.2 435.7 L1057.3 435.9 L1052.4 436.4 L1047.6 437.2 L1042.6 438.4 L1033.8 441.5 L1029.1 443.6 L1024.9 445.8 L1020.8 448.4 L1013.4 454 L1009.7 457.5 L1003.6 464.5 L1000.6 468.6 L998.1 472.7 L996 476.7 L994 481.3 L992.3 485.8 L991.1 490.2 L990 494.9 L989.3 499.7 L988.9 504.8 L988.8 509.6 L989.1 514.2 L989.7 519.4 L990.6 524.2 L991.7 528.7 L993.4 533.7 L997.1 542 Z M1133.2 491.6 L1134.2 500.1 L1134.4 504.4 L1133.7 513 L1132.9 517.2 L1130.1 529.2 L1128.7 533.3 L1125.2 541.2 L1123.1 545 L1118 552 L1115.2 555.3 L1108.8 561.1 L1105.2 563.8 L1097.7 568.3 L1093.7 570.2 L1085.4 573.1 L1081 574.2 L1076.6 574.9 L1067.7 575.6 L1063.2 575.5 L1054.3 574.4 L1049.9 573.4 L1041.3 570.7 L1037.2 568.9 L1029.3 564.5 L1025.6 562 L1018.7 556.2 L1015.6 553 L1010 546.1 L1007.6 542.4 L1003.4 534.6 L1001.8 530.6 L999.3 522.2 L998.5 518 L997.7 509.4 L997.8 505.1 L998.7 496.6 L1001.6 484.5 L1002.8 480.5 L1005.9 472.6 L1010.1 465.3 L1012.5 461.9 L1018.1 455.5 L1021.2 452.6 L1027.9 447.5 L1031.5 445.2 L1039.1 441.5 L1043.1 439.9 L1051.4 437.7 L1059.9 436.5 L1068.5 436.4 L1077.2 437.4 L1081.4 438.3 L1089.8 440.9 L1093.8 442.5 L1101.5 446.6 L1105.2 449 L1112 454.5 L1115.2 457.5 L1120.9 464.1 L1123.4 467.7 L1127.7 475.2 L1129.4 479.2 L1132.2 487.4 Z" fill="#5d4b39" fill-rule="evenodd" filter="url(#b15)"/>
<path d="M1000 546.5 L1003.1 550.5 L1006.6 554.6 L1010.4 558.6 L1014.8 562.5 L1019 565.8 L1023.2 568.6 L1028.2 571.7 L1033.2 574.2 L1038.1 576.3 L1042.9 578.1 L1048.6 579.7 L1053.6 580.8 L1059 581.7 L1064.5 582.2 L1070.4 582.3 L1075.7 582.1 L1080.8 581.5 L1086.5 580.5 L1091.9 579.2 L1096.6 577.7 L1101.6 575.8 L1106.5 573.4 L1110.8 571.1 L1117.4 565.7 L1121.1 562.1 L1124.1 558.7 L1127.1 554.8 L1129.8 550.8 L1132.3 546.3 L1134.3 542.2 L1136.1 537.7 L1137.7 532.9 L1138.8 528.2 L1139.6 523.7 L1140.1 518.9 L1140.3 513.8 L1140.2 509.3 L1139.7 504.5 L1139 499.7 L1137.8 494.7 L1134.8 485.8 L1132.7 481.1 L1130.4 476.8 L1125.2 468.9 L1122.1 465.1 L1118.7 461.4 L1123.4 467.7 L1125.6 471.4 L1129.4 479.2 L1131 483.2 L1133.2 491.6 L1133.8 495.8 L1134.4 504.4 L1133.7 513 L1132.9 517.2 L1129.8 530.5 L1128.4 534.6 L1124.9 542.5 L1122.8 546.3 L1117.8 553.3 L1114.9 556.5 L1108.4 562.4 L1101.3 567.4 L1097.4 569.6 L1089.3 573 L1080.7 575.4 L1071.9 576.7 L1062.9 576.8 L1054 575.7 L1045.2 573.5 L1036.9 570.2 L1029 565.8 L1021.8 560.5 L1015.3 554.3 L1009.7 547.4 L1005.1 539.9 L1003.1 535.9 L1000.1 527.7 L998.2 519.2 L997.4 510.6 L997.8 502.1 L998.4 497.9 L1001.6 484.5 L1004.2 476.5 L1005.9 472.6 L1010.1 465.3 L1012.5 461.9 L1018.1 455.5 L1021.2 452.6 L1027.9 447.5 L1031.5 445.2 L1038.1 441.9 L1033.5 443.6 L1029.2 445.6 L1025 447.8 L1021 450.4 L1013.7 456 L1010 459.4 L1004 466.3 L1001.1 470.3 L996.5 478.3 L994.5 482.9 L992.9 487.4 L991.6 491.7 L990.5 496.6 L989.8 501.3 L989.5 505.8 L989.4 510.9 L989.7 515.7 L990.2 520.2 L991.1 525 L992.3 529.7 L993.9 534.6 L997.3 542.4 Z" fill="#5f4c3a" fill-rule="evenodd" filter="url(#b15)"/>
<path d="M1000.1 546.6 L1003.3 550.8 L1006.6 554.6 L1010.6 558.8 L1014.8 562.5 L1019 565.8 L1023.2 568.6 L1028.2 571.7 L1033.2 574.2 L1038.1 576.3 L1042.9 578.1 L1048.6 579.7 L1054 580.9 L1059.4 581.7 L1064.4 582.2 L1070.3 582.3 L1075.8 582 L1080.8 581.5 L1086.1 580.6 L1091.5 579.3 L1097 577.5 L1101.7 575.7 L1106.5 573.5 L1110.4 571.3 L1116.5 566.3 L1120.1 562.8 L1123.2 559.3 L1126.1 555.5 L1128.7 551.6 L1131.2 547.2 L1133.2 543.1 L1135 538.7 L1136.5 533.9 L1137.6 529.3 L1138.4 524.8 L1138.9 520.1 L1139.1 515.3 L1139 510.3 L1138.5 505.5 L1136.7 496.4 L1135.3 491.6 L1131.7 483 L1128.6 477.4 L1131 483.2 L1132.2 487.4 L1133.8 495.8 L1134.4 504.4 L1134.2 508.7 L1132.9 517.2 L1129.5 531.7 L1126.5 539.9 L1122.5 547.5 L1120.1 551.1 L1114.6 557.8 L1111.4 560.9 L1108.1 563.7 L1100.9 568.7 L1093.1 572.7 L1084.7 575.7 L1076 577.5 L1067 578.1 L1058.1 577.6 L1053.6 577 L1045 574.8 L1036.6 571.4 L1028.7 567.1 L1021.5 561.8 L1014.9 555.6 L1009.4 548.6 L1004.7 541.1 L1001.2 533.1 L999.8 529 L997.9 520.5 L997.1 512 L997.5 503.3 L999 495 L1002.8 480.5 L1005.9 472.6 L1010.1 465.3 L1015.2 458.6 L1018.1 455.5 L1022.6 451.4 L1017.6 454.9 L1013.8 458 L1007.3 464.4 L1004.2 468.3 L999.2 475.8 L996.9 480.2 L993.5 488.6 L992.1 493.4 L990.4 502.4 L990 507.4 L990 512.1 L990.2 516.6 L990.8 521.3 L991.6 526.1 L992.8 530.7 L994.4 535.6 L997.6 542.7 Z" fill="#604e3b" fill-rule="evenodd" filter="url(#b15)"/>
<path d="M1003 550.5 L1006.8 554.9 L1010.7 558.8 L1014.7 562.4 L1018.7 565.5 L1023.5 568.9 L1028.3 571.7 L1033.1 574.2 L1037.8 576.2 L1043.3 578.2 L1048.7 579.7 L1053.9 580.9 L1059 581.7 L1064.8 582.2 L1070.4 582.3 L1075.7 582.1 L1080.8 581.5 L1086.5 580.5 L1091.9 579.2 L1097 577.5 L1101.7 575.7 L1106.5 573.5 L1110 571.5 L1115.8 566.8 L1119.2 563.4 L1122.2 560 L1125.1 556.3 L1127.7 552.3 L1130.2 548 L1132.2 543.7 L1133.9 539.6 L1135.3 535.1 L1136.4 530.5 L1137.3 525.7 L1137.8 521 L1138 516.5 L1137.9 511.8 L1137.4 507.1 L1136.6 502.2 L1134.2 493.3 L1132.5 488.7 L1133.8 495.8 L1134.2 500.1 L1134.2 508.7 L1132.9 517.2 L1129.2 532.9 L1126.2 541 L1124.3 545 L1119.8 552.4 L1114.3 559 L1107.9 564.9 L1100.7 569.9 L1092.8 573.9 L1084.5 576.9 L1075.7 578.7 L1066.8 579.4 L1057.8 578.9 L1049 577.3 L1040.4 574.5 L1032.3 570.6 L1024.7 565.8 L1017.8 560.1 L1011.8 553.5 L1006.7 546.3 L1002.5 538.5 L999.5 530.2 L997.6 521.8 L996.8 513.2 L996.9 508.8 L997.8 500.3 L1001.6 484.5 L1004.2 476.5 L1007.9 468.9 L1010.1 465.3 L1014.3 459.6 L1010.8 462.9 L1007.5 466.4 L1002.1 473.6 L999.5 477.7 L995.6 485.8 L993.9 490.4 L991.7 499.1 L991 503.7 L990.6 508.6 L990.8 517.8 L991.4 522.7 L992.3 527.4 L994.9 536.3 L996.8 540.9 L997.8 543.1 L999.8 546.2 Z" fill="#624f3d" fill-rule="evenodd" filter="url(#b15)"/>
<path d="M1075.1 326.2 L1074.5 325.9 L1073.8 326.1 L1073.2 327.8 L1073.5 328.9 L1073.3 330.2 L1073.5 331.7 L1071.4 340.5 L1071.7 341.3 L1072.2 341.6 L1075.6 340.2 L1076 339.8 L1078.1 331.4 L1078.1 330.4 L1077.7 329.5 Z M899.5 397.7 L898.8 397.6 L898.3 397.8 L898 398.3 L898 398.9 L901.2 404 L904 409.5 L904.4 409.8 L907.7 410.6 L908.5 410.4 L908.9 409.8 L908.8 409.3 L904.6 401 L903.8 400.3 Z M839.4 302.8 L851 321.3 L852 333.1 L853.3 340.3 L854.5 345.3 L856.4 351.1 L860.5 349.4 L858.7 344.1 L857.6 339.5 L852.1 315.8 L843.5 303.8 L843.2 302.9 L843.2 301.7 L842.6 300.5 L842.6 299.1 L841.5 297.7 L840.7 297.7 L840.2 298.2 L839.1 301.7 Z" fill="#fff" fill-rule="evenodd"/>
<path d="M984.1 327.9 L987.9 322.8 L990.1 318.5 L991.4 314.8 L991.1 312.3 L989.4 306.4 L986.7 301.1 L985.3 299.2 L982.6 296.1 L979.9 293.6 L979.1 293.5 L978.4 294 L978.3 294.7 L979.5 296.9 L980.6 299.8 L983.6 311.8 L984.1 315 L984.1 318.2 L983.7 321.4 L982.9 324.5 L982.1 326.5 Z M924.4 323.3 L927.1 327.1 L930.5 330.7 L933.8 333.4 L936.1 334.8 L937 335.2 L937.8 334.9 L938 334.3 L937.9 333.8 L935.6 330.9 L933.1 326.8 L931.6 322.1 L931.1 318.9 L930.5 306.5 L930.7 303.5 L931.3 300.6 L929.9 299.7 L928.3 301.8 L926.4 305.4 L925.5 307.5 L924.4 311.2 L924 313.5 L923.8 317.3 L923.8 319.6 Z" fill="#fff" fill-rule="evenodd"/>
<path d="M941.8 497.2 L941.9 486.3 L941.5 485.5 L940.7 485.3 L940.1 485.5 L939.8 486 L936.8 497.1 L936.8 498.4 L937.3 499.5 L950.5 518.2 L951.1 525.8 L951.9 531.3 L953.5 539.5 L955 545 L958.7 555.6 L963.2 553.6 L959.7 543.7 L957.6 535.8 L956.6 530.5 L955.1 516.7 L942.1 498.1 Z M978.1 587.3 L985.2 594.7 L991 599.5 L996.3 603.4 L1002.4 607.4 L1006.4 611.2 L1017.7 633.3 L1051.4 642.3 L1052.6 642.1 L1072 628.2 L1077.3 626.8 L1087.8 625.8 L1098.3 623.9 L1102.9 622.6 L1113.2 618.6 L1110.9 613.8 L1103.4 616.8 L1092.8 620 L1082 622 L1070.1 623.1 L1050.9 636.7 L1050.1 637.1 L1049.2 637 L1021.7 629.8 L1021.1 629 L1010.2 607.7 L998.1 599.3 L991.6 594 L987.5 590.1 L981.9 584.1 L978.6 580.1 L974.7 583.1 Z M1142.3 600 L1148.5 594.1 L1154.1 587.6 L1159.2 580.9 L1164.8 572 L1186.1 561.1 L1186.8 560.1 L1189.2 548 L1188.8 547 L1188 546.8 L1187.1 547.5 L1186.8 548.4 L1186.4 548.9 L1184.8 552.3 L1182.2 557.1 L1181.6 557.7 L1160.9 568.3 L1156.3 575.7 L1151.6 582.3 L1146.4 588.5 L1140.8 594.2 L1136.8 597.7 L1140.2 601.8 Z" fill="#fff" fill-rule="evenodd"/>
<path d="M1081.5 579.1 L1081 579.5 L1080.9 580.2 L1081.2 580.8 L1081.8 581 L1089 579.6 L1088 577.2 Z M1116.8 565 L1121.1 560.3 L1124 556.6 L1126.4 552.9 L1128.7 548.9 L1130.7 544.7 L1132.6 540.2 L1134 535.8 L1135 531.5 L1135.8 526.9 L1136.3 522.4 L1136.5 517.7 L1136.4 512.9 L1136.2 510.8 L1135.5 510.1 L1134.8 510.2 L1134.3 510.8 L1133.2 517.3 L1129.2 534.2 L1126.2 542.4 L1124.3 546.4 L1119.8 553.7 L1117.1 557.2 L1113.3 561.3 Z M1003.2 478.4 L1003.2 477.7 L1002.7 477.2 L1002.1 477.1 L1001.5 477.4 L998.1 483.5 L996.3 487.6 L994.7 491.9 L993.5 496.3 L992.5 500.8 L991.8 505.3 L991.5 509.9 L991.6 518.9 L992.2 523.6 L993 528.1 L994.7 534.3 L999.3 532.7 L997.8 527.4 L997 523 L996.2 514.5 L996.3 510 L996.6 505.7 L998.1 497.4 L1001.3 484.4 Z" fill="#fff" fill-rule="evenodd"/>
</g>
<circle cx="1015.2" cy="713.4" r="9" fill="#050505" filter="url(#tb)"/>
<g font-size="13" fill="#111" stroke="#111" stroke-width="0.25" text-anchor="middle" filter="url(#tb)">
<text transform="translate(982 691.9) rotate(-31)" y="4.5">10</text>
<text transform="translate(965.6 666.1) rotate(-31)" y="4.5">20</text>
<text transform="translate(949.4 640.6) rotate(-31)" y="4.5">30</text>
<text transform="translate(933.5 615.2) rotate(-31)" y="4.5">40</text>
<text transform="translate(917.7 590) rotate(-31)" y="4.5">50</text>
<text transform="translate(902.2 565.1) rotate(-31)" y="4.5">60</text>
<text transform="translate(887 540.3) rotate(-31)" y="4.5">70</text>
<text transform="translate(871.9 515.8) rotate(-31)" y="4.5">80</text>
<text transform="translate(857.1 491.5) rotate(-31)" y="4.5">90</text>
<text transform="translate(842.5 467.4) rotate(-31)" y="4.5">100</text>
<text transform="translate(828.2 443.5) rotate(-31)" y="4.5">110</text>
<text transform="translate(814.1 419.8) rotate(-31)" y="4.5">120</text>
<text transform="translate(800.2 396.3) rotate(-31)" y="4.5">130</text>
<text transform="translate(786.5 373) rotate(-31)" y="4.5">140</text>
<text transform="translate(773.1 349.9) rotate(-31)" y="4.5">150</text>
<text transform="translate(759.9 327.1) rotate(-31)" y="4.5">160</text>
<text transform="translate(746.9 304.4) rotate(-31)" y="4.5">170</text>
<text transform="translate(734.2 282) rotate(-31)" y="4.5">180</text>
<text transform="translate(721.7 259.8) rotate(-31)" y="4.5">190</text>
<text transform="translate(709.4 237.7) rotate(-31)" y="4.5">200</text>
<text transform="translate(697.3 215.9) rotate(-31)" y="4.5">210</text>
<text transform="translate(685.5 194.3) rotate(-31)" y="4.5">220</text>
<text transform="translate(1049.8 708) rotate(-31)" y="4.5">10</text>
<text transform="translate(1075.4 692.3) rotate(-31)" y="4.5">20</text>
<text transform="translate(1101.1 676.6) rotate(-31)" y="4.5">30</text>
<text transform="translate(1126.7 660.9) rotate(-31)" y="4.5">40</text>
<text transform="translate(1152.4 645.2) rotate(-31)" y="4.5">50</text>
<text transform="translate(1178 629.5) rotate(-31)" y="4.5">60</text>
<text transform="translate(1203.6 613.8) rotate(-31)" y="4.5">70</text>
<text transform="translate(1229.3 598.1) rotate(-31)" y="4.5">80</text>
<text transform="translate(1254.9 582.4) rotate(-31)" y="4.5">90</text>
</g>
</svg>
<div class="abs" style="left:440px;top:13px;font-size:14px;color:#999;line-height:1;white-space:nowrap">Material dimensions</div>
<div class="dl" style="top:35.5px">X:</div>
<div class="inp" style="top:30.5px">100 mm</div>
<div class="dl" style="top:65.5px">Y:</div>
<div class="inp" style="top:60.5px">180 mm</div>
<div class="dl" style="top:95.5px">Z:</div>
<div class="inp" style="top:90.5px">20 mm</div>
<svg class="abs" style="left:317px;top:689px" width="14" height="12"><path d="M1.500 6.500 L5 10 L12.500 2.500" stroke="#8a8a8a" stroke-width="2.600" fill="none"/></svg>
<div class="abs" style="left:336.500px;top:688px;font-size:14px;color:#999;line-height:1;white-space:nowrap">Detailed preview</div>
<div class="abs" style="left:453px;top:671px;width:120px;height:45px;border:1px solid #c2c2c2;background:#fff"></div>
<svg class="abs" style="left:474px;top:686px" width="17" height="17"><circle cx="8.300" cy="8.500" r="6.600" fill="none" stroke="#555" stroke-width="2.100"/><path d="M8.800 4.800 V9 H5.500" stroke="#555" stroke-width="1.600" fill="none"/></svg>
<div class="abs" style="left:495.500px;top:687px;font-size:14px;color:#666;line-height:1;white-space:nowrap">Simulate</div>
</div><!-- three-dot splitter handle -->
<div class="abs" style="left:699.500px;top:768px;width:15px;height:31px;background:#fff;border:1px solid #d0d0d0"></div>
<div class="abs" style="left:705.500px;top:776.500px;width:3px;height:3px;background:#777;box-shadow:0 5px 0 #777,0 10px 0 #777"></div>
<!-- bottom bar -->
<div id="bot">
  <div class="abs" style="left:5.500px;top:5px;font-size:14px;color:#4a4a4a;line-height:1;white-space:nowrap">Workpieces for “brill 90”</div>
  <svg class="abs" style="left:158px;top:6px" width="12" height="12"><path d="M1.500 5.500 L6 1.500 L10.500 5.500 M1.500 10 L6 6 L10.500 10" stroke="#555" stroke-width="1.300" fill="none"/></svg>
  <svg class="abs" style="left:178px;top:5px" width="14" height="14"><circle cx="7" cy="7" r="6.500" fill="#3f7fc4"/><text x="7" y="10.500" font-size="10" font-weight="bold" fill="#fff" text-anchor="middle" font-family="'Liberation Sans',sans-serif">?</text></svg>
</div>
</body>
</html>
